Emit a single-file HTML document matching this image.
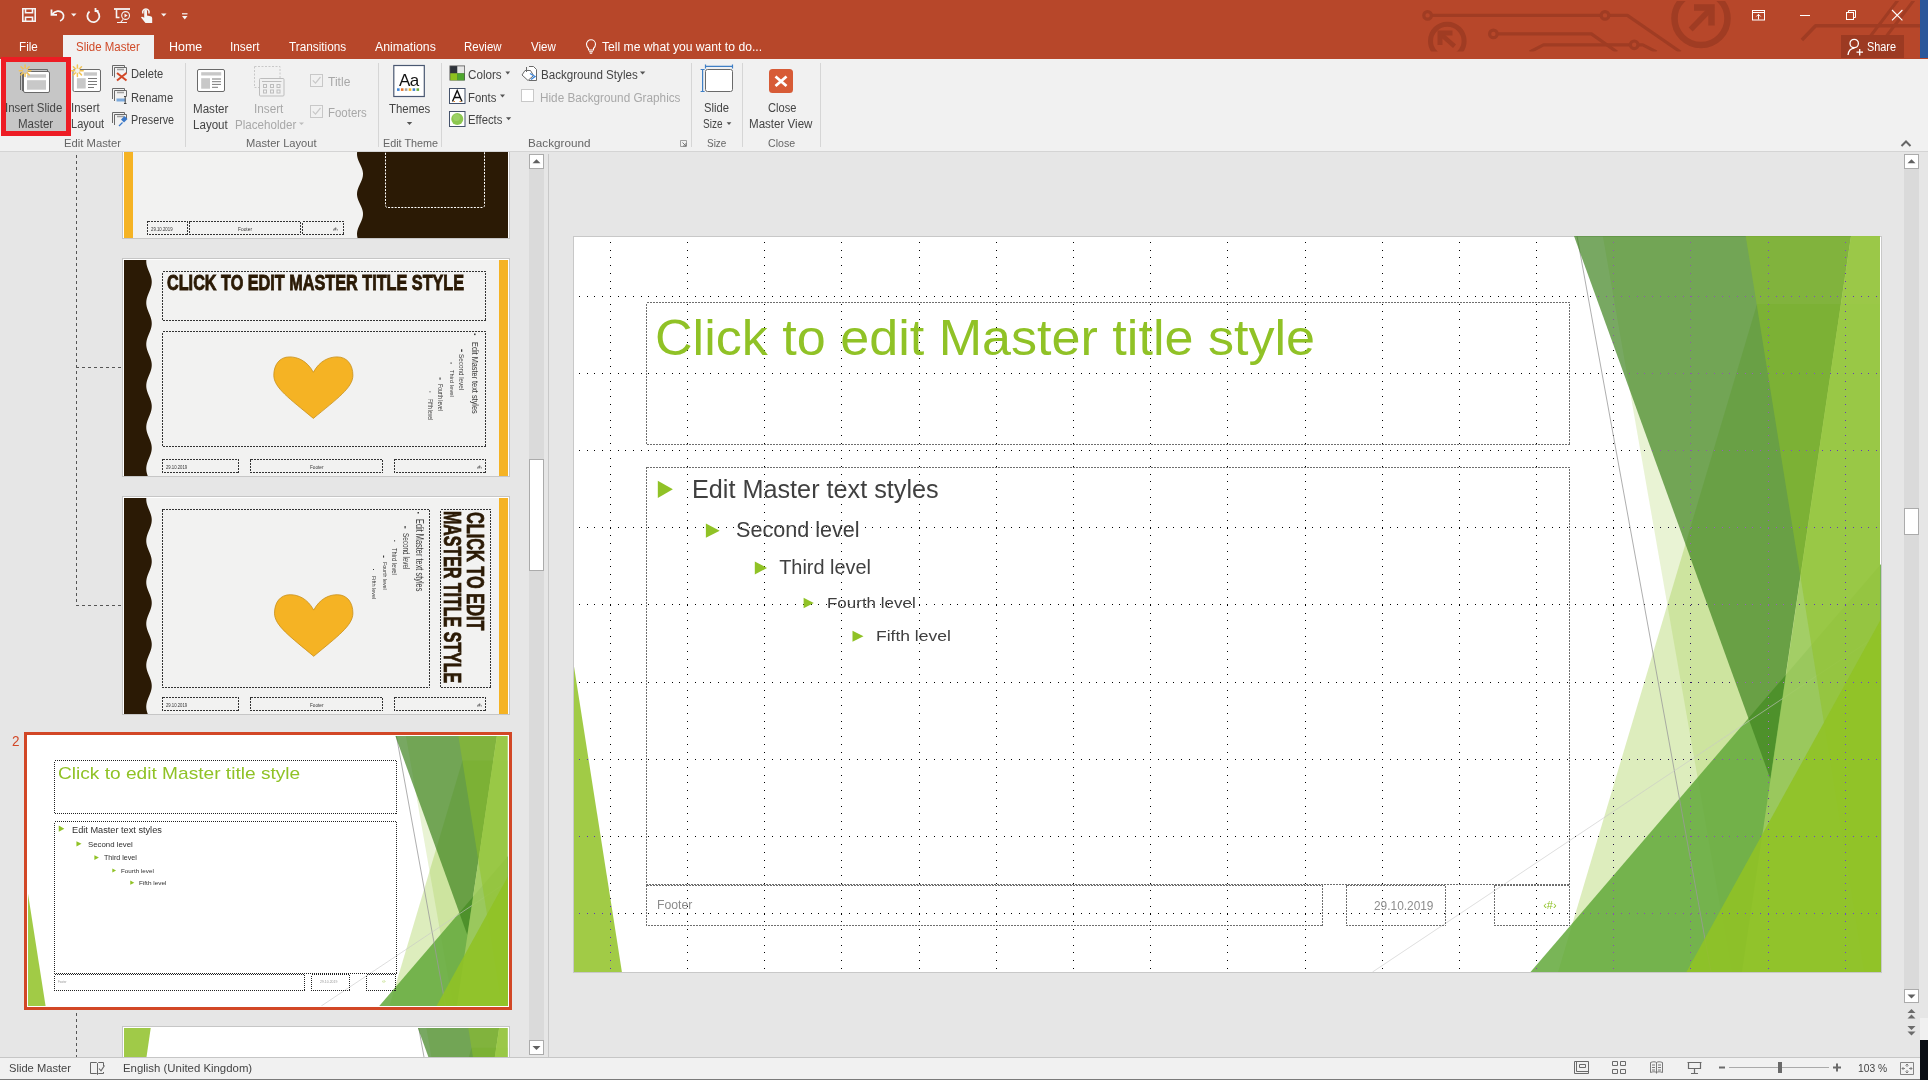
<!DOCTYPE html><html><head><meta charset='utf-8'><style>
*{margin:0;padding:0;box-sizing:border-box}
html,body{width:1928px;height:1080px;overflow:hidden;background:#E6E6E6;font-family:"Liberation Sans", sans-serif;position:relative}
.a{position:absolute}
.t{position:absolute;white-space:nowrap;line-height:1}
svg{display:block}
</style></head><body>
<div class='a' style='left:0;top:0;width:1928px;height:59px;background:#B7472A'></div>
<svg class='a' style='left:0;top:0' width='1928' height='59' viewBox='0 0 1928 59'>
<defs><clipPath id='cpat'><rect x='1400' y='1' width='520' height='50.5'/></clipPath></defs>
<g clip-path='url(#cpat)' fill='none' stroke='#A03C23' stroke-width='3.2' stroke-linejoin='round'>
<path d='M1431 15.4H1601M1609 15.4H1627.4L1680.5 52'/>
<circle cx='1427.6' cy='15.4' r='3.8'/><circle cx='1605' cy='15.4' r='3.8'/>
<path d='M1497.2 33.9H1591.4L1617 52'/><circle cx='1493.4' cy='33.9' r='3.8'/>
<path d='M1529.8 52L1543.5 44.8H1630.4M1638 44.8H1642.8L1656.5 52'/><circle cx='1634.2' cy='44.8' r='3.8'/>
<circle cx='1447.3' cy='41' r='16.8' stroke-width='5'/>
<path d='M1454.5 46.2L1439.5 33' stroke-width='4.5'/>
<path d='M1440 45V33H1452.5' stroke-width='5' stroke-linejoin='miter'/>
<circle cx='1701' cy='18.5' r='26.5' stroke-width='6.5'/>
<path d='M1690.7 29.5L1711 8.5' stroke-width='5.5'/>
<path d='M1694 7.5H1711.5V25.5' stroke-width='6.5' stroke-linejoin='miter'/>
<path d='M1801.9 40L1815.6 25.8H1920' stroke-width='3.5'/>
<path d='M1898 0L1866 42M1914 0L1882 42' stroke-width='3'/>
</g></svg>
<div class='a' style='left:1920px;top:0;width:8px;height:58px;background:#2B579A'></div>
<svg class='a' style='left:0;top:0' width='200' height='32' viewBox='0 0 200 32' fill='none' stroke='#F5F5F5' stroke-width='1.6'>
<path d='M22.8 8.8H35.2V21.2H22.8Z'/><path d='M25.5 8.8V12.8H32.5V8.8M25.5 21.2V17.2H32.5V21.2'/>
<path d='M52 14.5C55 10.5 60 10 62.5 13 C65 16 63 20 60 21' stroke-width='1.8'/><path d='M51.5 9.5V14.8H57' stroke-width='1.8'/>
<path d='M71 13.5H76.5L73.75 16.5Z' fill='#F5F5F5' stroke='none'/>
<path d='M95.5 10.5A6 6 0 1 1 89.5 11.5' stroke-width='1.8'/><path d='M95.5 8V11H98.5' stroke-width='1.8'/>
<path d='M114 9H130' stroke-width='1.8'/><path d='M116.5 9.5V17.5H119.5'/><circle cx='125.6' cy='15.5' r='3.9' stroke-width='1.1'/><path d='M124.5 13.4V17.6L127.6 15.5Z' fill='#F5F5F5' stroke='none'/><path d='M117 22.5H127M120.5 22.5L123 19.5' stroke-width='1.1'/>
<path d='M143 13.5A3.2 3.2 0 1 1 148.8 13.5' stroke-width='1.5'/><path d='M145.5 23C143.5 20.5 141.5 18.5 141 17.3C141.5 16.5 142.6 16.6 144.2 17.8V10.8A1.4 1.4 0 0 1 147 10.8V15.5L150.5 16.3C151.8 16.6 152.2 17.4 152.2 18.5V23Z' fill='#F5F5F5' stroke='none'/>
<path d='M161 13.5H166.5L163.75 16.5Z' fill='#F5F5F5' stroke='none'/>
<path d='M182 13.8H187.5' stroke-width='1.2'/><path d='M182 16H187.5L184.75 19.5Z' fill='#F5F5F5' stroke='none'/>
</svg>
<svg class='a' style='left:1740px;top:0' width='188' height='60' viewBox='1740 0 188 60' fill='none' stroke='#FFFFFF' stroke-width='1'>
<rect x='1752.5' y='10.5' width='12' height='9.5'/><path d='M1752.5 12.5H1764.5M1758.5 19.5V14.5M1756.3 16.5L1758.5 14.3L1760.7 16.5'/>
<path d='M1800 15.5H1810'/>
<rect x='1846.5' y='12.5' width='7' height='7'/><path d='M1848.5 12.5V10.5H1855.5V17.5H1853.5'/>
<path d='M1892 10L1902.4 20.4M1902.4 10L1892 20.4' stroke-width='1.1'/>
</svg>
<div class='a' style='left:1841px;top:35px;width:63px;height:23px;background:#9C3A22'></div>
<svg class='a' style='left:1846px;top:38px' width='20' height='19' viewBox='0 0 20 19' fill='none' stroke='#fff' stroke-width='1.3'>
<circle cx='8.2' cy='5.5' r='4.2'/><path d='M2 17C2.5 12.5 5 10.5 8.5 10.2'/><path d='M10.5 14.2H17M13.7 11V17.5'/></svg>
<div class='t' style='left:1867.00px;top:41.09px;font-size:12.3px;color:#fff;transform:scaleX(0.8855);transform-origin:0 0;'>Share</div>
<div class='a' style='left:63px;top:35px;width:91px;height:24px;background:#F1F1F1'></div>
<div class='t' style='left:19.05px;top:41.29px;font-size:12.3px;color:#fff;transform:scaleX(0.9486);transform-origin:0 0;'>File</div>
<div class='t' style='left:168.69px;top:41.29px;font-size:12.3px;color:#fff;transform:scaleX(1.0106);transform-origin:0 0;'>Home</div>
<div class='t' style='left:230.04px;top:41.29px;font-size:12.3px;color:#fff;transform:scaleX(0.9559);transform-origin:0 0;'>Insert</div>
<div class='t' style='left:289.00px;top:41.29px;font-size:12.3px;color:#fff;transform:scaleX(0.9574);transform-origin:0 0;'>Transitions</div>
<div class='t' style='left:375.00px;top:41.29px;font-size:12.3px;color:#fff;'>Animations</div>
<div class='t' style='left:464.07px;top:41.29px;font-size:12.3px;color:#fff;transform:scaleX(0.9306);transform-origin:0 0;'>Review</div>
<div class='t' style='left:531.00px;top:41.29px;font-size:12.3px;color:#fff;transform:scaleX(0.9416);transform-origin:0 0;'>View</div>
<div class='t' style='left:76.00px;top:41.29px;font-size:12.3px;color:#D04A28;transform:scaleX(0.9334);transform-origin:0 0;'>Slide Master</div>
<svg class='a' style='left:584px;top:38px' width='14' height='16' viewBox='0 0 14 16' fill='none' stroke='#fff' stroke-width='1.1'>
<path d='M4.5 10.5C3 9 2.5 8 2.5 6.3A4.5 4.5 0 0 1 11.5 6.3C11.5 8 11 9 9.5 10.5V12H4.5Z'/><path d='M5 13.7H9M5.8 15.2H8.2'/></svg>
<div class='t' style='left:602.00px;top:41.29px;font-size:12.3px;color:#fff;transform:scaleX(0.9878);transform-origin:0 0;'>Tell me what you want to do...</div>
<div class='a' style='left:0;top:59px;width:1928px;height:92px;background:#F1F1F1'></div>
<div class='a' style='left:0;top:151px;width:1928px;height:1px;background:#D4D4D4'></div>
<div class='a' style='left:185px;top:63px;width:1px;height:84px;background:#D6D6D6'></div>
<div class='a' style='left:378px;top:63px;width:1px;height:84px;background:#D6D6D6'></div>
<div class='a' style='left:441px;top:63px;width:1px;height:84px;background:#D6D6D6'></div>
<div class='a' style='left:691px;top:63px;width:1px;height:84px;background:#D6D6D6'></div>
<div class='a' style='left:742px;top:63px;width:1px;height:84px;background:#D6D6D6'></div>
<div class='a' style='left:820px;top:63px;width:1px;height:84px;background:#D6D6D6'></div>
<div class='a' style='left:1px;top:57px;width:70px;height:79px;border:5px solid #ED1C24;background:#C6C6C6'></div>
<svg class='a' style='left:0;top:60px' width='190' height='72' viewBox='0 60 190 72'>
<g fill='none' stroke='#6A6A6A' stroke-width='1'>
<path d='M20.5 90V73M20.5 73H22M22.5 91V71.5M22.5 69.5H47.5V71'/>
</g>
<rect x='23.5' y='71.5' width='26' height='21' rx='1.5' fill='#fff' stroke='#6A6A6A'/>
<rect x='27' y='74.3' width='19' height='3.4' fill='#C8C8C8'/><rect x='27' y='80.2' width='19' height='9.5' fill='#C8C8C8'/>
<circle cx='25.1' cy='70.8' r='3.2' fill='#C6C6C6'/>
<g stroke='#F2C458' stroke-width='1.5' stroke-linecap='round'><path d='M25.1 65V76.6M19.3 70.8H30.9M21 66.7L29.2 74.9M29.2 66.7L21 74.9'/></g>
<circle cx='25.1' cy='70.8' r='2.3' fill='#C6C6C6'/>
<rect x='73' y='69.5' width='27.5' height='22' rx='1.5' fill='#fff' stroke='#6A6A6A'/>
<circle cx='77.4' cy='70.8' r='2.8' fill='#F1F1F1'/>
<g stroke='#F2C458' stroke-width='1.5' stroke-linecap='round'><path d='M77.4 65V76.6M71.6 70.8H83.2M73.3 66.7L81.5 74.9M81.5 66.7L73.3 74.9'/></g>
<circle cx='77.4' cy='70.8' r='2.3' fill='#F1F1F1'/>
<rect x='83.8' y='72.3' width='13.2' height='3.4' fill='#C8C8C8'/><rect x='76.9' y='78.2' width='8.8' height='10.3' fill='#C8C8C8'/>
<path d='M88 78.5H97M88 81.5H97M88 84.5H97M88 87.5H94' stroke='#7A7A7A' stroke-width='1'/>
<g fill='none' stroke='#6A6A6A' stroke-width='1'>
<path d='M112.5 76V65.5H124.5V67.5M114.5 77.5V67.5H126.5V73'/>
<path d='M112.5 99V88.5H124.5V90.5M114.5 101V90.5H126.5V96'/>
<path d='M112.5 123V112.5H124.5V114.5M114.5 125V114.5H126.5V119'/>
</g>
<path d='M117 69.5H124M117 92.5H124M117 116.5H124' stroke='#A0A0A0' stroke-width='1.5'/>
<path d='M117 73L126.5 80.5M126.5 73L117 80.5' stroke='#D24726' stroke-width='2'/>
<rect x='116.5' y='98.5' width='9' height='3' fill='#7BA9DC'/>
<path d='M124 96.5H126.5M125.2 96.5V103.5M124 103.5H126.5' stroke='#444' stroke-width='1'/>
<path d='M119 126L122.5 122.5' stroke='#3B78C8' stroke-width='1.3'/><path d='M121 119.5L124.5 116L127.5 119L124 122.5Z' fill='#3B78C8'/>
</svg>
<div class='t' style='left:5.45px;top:102.34px;font-size:12px;color:#444444;transform:scaleX(0.9536);transform-origin:0 0;'>Insert Slide</div>
<div class='t' style='left:17.50px;top:118.14px;font-size:12px;color:#444444;transform:scaleX(0.9597);transform-origin:0 0;'>Master</div>
<div class='t' style='left:71.45px;top:102.34px;font-size:12px;color:#444444;transform:scaleX(0.9536);transform-origin:0 0;'>Insert</div>
<div class='t' style='left:70.80px;top:118.14px;font-size:12px;color:#444444;transform:scaleX(0.9184);transform-origin:0 0;'>Layout</div>
<div class='t' style='left:130.60px;top:68.34px;font-size:12px;color:#444444;transform:scaleX(0.9282);transform-origin:0 0;'>Delete</div>
<div class='t' style='left:130.60px;top:91.54px;font-size:12px;color:#444444;transform:scaleX(0.9281);transform-origin:0 0;'>Rename</div>
<div class='t' style='left:130.60px;top:114.14px;font-size:12px;color:#444444;transform:scaleX(0.8977);transform-origin:0 0;'>Preserve</div>
<div class='t' style='left:63.60px;top:137.67px;font-size:11.5px;color:#666666;transform:scaleX(0.9790);transform-origin:0 0;'>Edit Master</div>
<svg class='a' style='left:185px;top:60px' width='260' height='72' viewBox='185 60 260 72'>
<rect x='197.5' y='69.5' width='27' height='22' rx='1.5' fill='#fff' stroke='#6A6A6A'/>
<rect x='201.2' y='72.2' width='20' height='3.3' fill='#C8C8C8'/><rect x='201.2' y='78.2' width='8.8' height='10.5' fill='#C8C8C8'/>
<path d='M212 79H221M212 81.7H221M212 84.4H221M212 87.3H218' stroke='#7A7A7A' stroke-width='1'/>
<rect x='254.5' y='66.5' width='25.5' height='21' fill='none' stroke='#C8C8C8' stroke-dasharray='2 1.5'/>
<rect x='259.5' y='78.5' width='24.5' height='17.5' rx='1' fill='#F1F1F1' stroke='#BDBDBD'/>
<path d='M262 81.5H281.5' stroke='#BDBDBD'/>
<g fill='none' stroke='#BDBDBD' stroke-width='1'>
<rect x='263.5' y='84.5' width='3' height='3'/><rect x='270.5' y='84.5' width='3' height='3'/><rect x='277' y='84.5' width='3' height='3'/>
<rect x='263.5' y='90' width='3' height='3'/><rect x='270.5' y='90' width='3' height='3'/><rect x='277' y='90' width='3' height='3'/>
</g>
<rect x='310.5' y='74.5' width='12' height='12' fill='#F1F1F1' stroke='#C8C8C8'/>
<rect x='310.5' y='105.5' width='12' height='12' fill='#F1F1F1' stroke='#C8C8C8'/>
<path d='M312.8 80.3L315.5 83.2L320.5 77M312.8 111.3L315.5 114.2L320.5 108' fill='none' stroke='#C8C8C8' stroke-width='1.2'/>
<path d='M299 122.5H304L301.5 125Z' fill='#BDBDBD'/>
<rect x='393.8' y='65.5' width='30.5' height='31' fill='#fff' stroke='#4A5872' stroke-width='1.2'/>
<rect x='397' y='88.3' width='2.6' height='2.6' fill='#3F86D8'/><rect x='400.9' y='88.3' width='2.6' height='2.6' fill='#E8742A'/>
<rect x='404.8' y='88.3' width='2.6' height='2.6' fill='#A5A5A5'/><rect x='408.7' y='88.3' width='2.6' height='2.6' fill='#F5B820'/>
<rect x='412.6' y='88.3' width='2.6' height='2.6' fill='#3E7ED0'/><rect x='416.5' y='88.3' width='2.6' height='2.6' fill='#6AAE3E'/>
<path d='M406.8 122H412.2L409.5 125Z' fill='#555'/>
</svg>
<div class='t' style='left:399px;top:71.5px;font-size:17px;color:#111;letter-spacing:-0.5px'>Aa</div>
<div class='t' style='left:193.40px;top:102.64px;font-size:12px;color:#444444;transform:scaleX(0.9652);transform-origin:0 0;'>Master</div>
<div class='t' style='left:193.40px;top:118.64px;font-size:12px;color:#444444;transform:scaleX(0.9647);transform-origin:0 0;'>Layout</div>
<div class='t' style='left:254.12px;top:102.64px;font-size:12px;color:#A8A8A8;transform:scaleX(0.9772);transform-origin:0 0;'>Insert</div>
<div class='t' style='left:234.60px;top:118.64px;font-size:12px;color:#A8A8A8;transform:scaleX(0.9672);transform-origin:0 0;'>Placeholder</div>
<div class='t' style='left:328.20px;top:76.24px;font-size:12px;color:#A8A8A8;transform:scaleX(1.0066);transform-origin:0 0;'>Title</div>
<div class='t' style='left:328.20px;top:107.34px;font-size:12px;color:#A8A8A8;transform:scaleX(0.9537);transform-origin:0 0;'>Footers</div>
<div class='t' style='left:246.40px;top:137.67px;font-size:11.5px;color:#666666;transform:scaleX(0.9691);transform-origin:0 0;'>Master Layout</div>
<div class='t' style='left:388.60px;top:102.64px;font-size:12px;color:#444444;transform:scaleX(0.9505);transform-origin:0 0;'>Themes</div>
<div class='t' style='left:382.60px;top:137.67px;font-size:11.5px;color:#666666;transform:scaleX(0.9400);transform-origin:0 0;'>Edit Theme</div>
<svg class='a' style='left:440px;top:60px' width='260' height='92' viewBox='440 60 260 92'>
<rect x='449.5' y='65.5' width='15.5' height='15' fill='#555' />
<rect x='450.3' y='66.3' width='7' height='7' fill='#2E333B'/><rect x='457.3' y='66.3' width='7' height='7' fill='#E6E6E6'/>
<rect x='450.3' y='73.3' width='7' height='7' fill='#8DC21F'/><rect x='457.3' y='73.3' width='7' height='7' fill='#4EA72E'/>
<rect x='449.5' y='88.5' width='15.5' height='15' fill='#fff' stroke='#45526A'/>
<path d='M452.5 101.5L457.2 90.5L462 101.5M454.3 97.5H460.2' fill='none' stroke='#111' stroke-width='1.4'/>
<path d='M453.5 101.5H455M459.5 101.5H461' stroke='#E8872A' stroke-width='1'/>
<rect x='449.5' y='111.5' width='15.5' height='15' fill='#fff' stroke='#45526A'/>
<circle cx='457.25' cy='119' r='6' fill='#8CC74F'/><circle cx='456.5' cy='117.5' r='3.5' fill='#A6D774' opacity='0.6'/>
<path d='M505.4 71.5H510.1L507.75 74.5Z M500 94.5H505L502.5 97.5Z M506 117.3H511.2L508.6 120.3Z' fill='#555'/>
<path d='M639.9 71.5H645.3L642.6 74.5Z' fill='#555'/>
<path d='M529 66.5H533.5L536.5 69.5V80.5H529' fill='#fff' stroke='#6A6A6A'/>
<path d='M525 70.5L530.5 70.5L533.5 75.5L528 80.5L522 75Z' fill='#fff' stroke='#6A6A6A'/>
<path d='M526.5 67V72' stroke='#6A6A6A'/>
<path d='M530 73.5L535 76.5L531 79.5' fill='none' stroke='#3F86D8' stroke-width='1.4'/>
<rect x='521.5' y='89.5' width='12' height='12' fill='#fff' stroke='#C8C8C8'/>
<path d='M680.5 140.5H686.5V146.5H680.5Z' fill='none' stroke='#8A8A8A' stroke-width='0.8'/>
<path d='M682.5 142.5L686 146M683 146H686V143' fill='none' stroke='#777' stroke-width='1'/>
</svg>
<svg class='a' style='left:695px;top:60px' width='110' height='40' viewBox='695 60 110 40'>
<rect x='705.5' y='69.5' width='27' height='22' rx='2' fill='#fff' stroke='#6A6A6A'/>
<rect x='769' y='69' width='24' height='24' rx='3.5' fill='#D75B36'/>
<path d='M775.5 76.5L786.5 86M786.5 76.5L775.5 86' stroke='#fff' stroke-width='2.8'/>

<path d='M705.5 66.4H732.5M705.5 64.5V68.5M732.5 64.5V68.5M702.6 69.5V91.5M700.6 69.5H704.6M700.6 91.5H704.6' stroke='#3F7FC5' stroke-width='1.2' fill='none'/>
</svg>
<div class='t' style='left:468.30px;top:68.64px;font-size:12px;color:#444444;transform:scaleX(0.9719);transform-origin:0 0;'>Colors</div>
<div class='t' style='left:468.30px;top:91.54px;font-size:12px;color:#444444;transform:scaleX(0.9430);transform-origin:0 0;'>Fonts</div>
<div class='t' style='left:468.30px;top:114.44px;font-size:12px;color:#444444;transform:scaleX(0.9434);transform-origin:0 0;'>Effects</div>
<div class='t' style='left:540.50px;top:68.64px;font-size:12px;color:#444444;transform:scaleX(0.9665);transform-origin:0 0;'>Background Styles</div>
<div class='t' style='left:539.50px;top:91.54px;font-size:12px;color:#A8A8A8;transform:scaleX(0.9797);transform-origin:0 0;'>Hide Background Graphics</div>
<div class='t' style='left:527.70px;top:137.67px;font-size:11.5px;color:#666666;transform:scaleX(1.0167);transform-origin:0 0;'>Background</div>
<div class='t' style='left:703.90px;top:102.14px;font-size:12px;color:#444444;transform:scaleX(0.9367);transform-origin:0 0;'>Slide</div>
<div class='t' style='left:703.20px;top:118.24px;font-size:12px;color:#444444;transform:scaleX(0.8365);transform-origin:0 0;'>Size</div>
<svg class='a' style='left:726px;top:121px' width='6' height='5'><path d='M0.6 1.2H5.4L3 4Z' fill='#555'/></svg>
<div class='t' style='left:707.40px;top:137.67px;font-size:11.5px;color:#666666;transform:scaleX(0.8646);transform-origin:0 0;'>Size</div>
<div class='t' style='left:767.50px;top:102.14px;font-size:12px;color:#444444;transform:scaleX(0.9256);transform-origin:0 0;'>Close</div>
<div class='t' style='left:749.40px;top:118.24px;font-size:12px;color:#444444;transform:scaleX(0.9647);transform-origin:0 0;'>Master View</div>
<div class='t' style='left:767.70px;top:137.67px;font-size:11.5px;color:#666666;transform:scaleX(0.9205);transform-origin:0 0;'>Close</div>
<svg class='a' style='left:1899px;top:137px' width='14' height='12'><path d='M2.5 9L7 4.5L11.5 9' fill='none' stroke='#666' stroke-width='2'/></svg>
<svg class='a' style='left:0;top:152px' width='122' height='905' viewBox='0 152 122 905'><path d='M76.5 149V602.5M76 367.5H121M76 605.5H121M76.5 1013V1057' stroke='#555' stroke-width='1' stroke-dasharray='3 3' fill='none' shape-rendering='crispEdges'/></svg>
<div class='a' style='left:0;top:152px;width:528px;height:905px;overflow:hidden'>
<div class='a' style='left:0;top:-152px;width:528px;height:1080px'>
<div class='a' style='left:122px;top:20px;width:388px;height:219px;border:1px solid #C6C6C6;background:#fff'></div>
<svg class='a' style='left:124px;top:22px' width='384' height='216' viewBox='124 22 384 216'>
<rect x='124' y='22' width='384' height='216' fill='#F2F2F1'/>
<rect x='124' y='22' width='9' height='216' fill='#F5B324'/>
<polygon points='508,22 360.93,22.0 360.24,23.5 359.53,25.0 358.85,26.5 358.24,28.0 357.72,29.5 357.33,31.0 357.08,32.5 357.00,34.0 357.08,35.5 357.33,37.0 357.72,38.5 358.24,40.0 358.85,41.5 359.53,43.0 360.24,44.5 360.93,46.0 361.57,47.5 362.12,49.0 362.56,50.5 362.85,52.0 362.99,53.5 362.96,55.0 362.77,56.5 362.43,58.0 361.95,59.5 361.36,61.0 360.70,62.5 360.00,64.0 359.30,65.5 358.64,67.0 358.05,68.5 357.57,70.0 357.23,71.5 357.04,73.0 357.01,74.5 357.15,76.0 357.44,77.5 357.88,79.0 358.43,80.5 359.07,82.0 359.76,83.5 360.47,85.0 361.15,86.5 361.76,88.0 362.28,89.5 362.67,91.0 362.92,92.5 363.00,94.0 362.92,95.5 362.67,97.0 362.28,98.5 361.76,100.0 361.15,101.5 360.47,103.0 359.76,104.5 359.07,106.0 358.43,107.5 357.88,109.0 357.44,110.5 357.15,112.0 357.01,113.5 357.04,115.0 357.23,116.5 357.57,118.0 358.05,119.5 358.64,121.0 359.30,122.5 360.00,124.0 360.70,125.5 361.36,127.0 361.95,128.5 362.43,130.0 362.77,131.5 362.96,133.0 362.99,134.5 362.85,136.0 362.56,137.5 362.12,139.0 361.57,140.5 360.93,142.0 360.24,143.5 359.53,145.0 358.85,146.5 358.24,148.0 357.72,149.5 357.33,151.0 357.08,152.5 357.00,154.0 357.08,155.5 357.33,157.0 357.72,158.5 358.24,160.0 358.85,161.5 359.53,163.0 360.24,164.5 360.93,166.0 361.57,167.5 362.12,169.0 362.56,170.5 362.85,172.0 362.99,173.5 362.96,175.0 362.77,176.5 362.43,178.0 361.95,179.5 361.36,181.0 360.70,182.5 360.00,184.0 359.30,185.5 358.64,187.0 358.05,188.5 357.57,190.0 357.23,191.5 357.04,193.0 357.01,194.5 357.15,196.0 357.44,197.5 357.88,199.0 358.43,200.5 359.07,202.0 359.76,203.5 360.47,205.0 361.15,206.5 361.76,208.0 362.28,209.5 362.67,211.0 362.92,212.5 363.00,214.0 362.92,215.5 362.67,217.0 362.28,218.5 361.76,220.0 361.15,221.5 360.47,223.0 359.76,224.5 359.07,226.0 358.43,227.5 357.88,229.0 357.44,230.5 357.15,232.0 357.01,233.5 357.04,235.0 357.23,236.5 357.57,238.0 508,238' fill='#2B1A05'/>
<rect x='385.5' y='10.5' width='99' height='197' rx='2' fill='none' stroke='#fff' stroke-width='1' stroke-dasharray='2 1.3'/>
<rect x='147.5' y='221.5' width='40' height='13' fill='none' stroke='#333' stroke-width='1' stroke-dasharray='2 1' shape-rendering='crispEdges'/>
<rect x='189.5' y='221.5' width='111' height='13' fill='none' stroke='#333' stroke-width='1' stroke-dasharray='2 1' shape-rendering='crispEdges'/>
<rect x='302.5' y='221.5' width='41' height='13' fill='none' stroke='#333' stroke-width='1' stroke-dasharray='2 1' shape-rendering='crispEdges'/>
</svg>
<div class='t' style='left:151.00px;top:225.72px;font-size:6px;color:#333;transform:scaleX(0.7168);transform-origin:0 0;'>29.10.2019</div>
<div class='t' style='left:238.00px;top:225.72px;font-size:6px;color:#333;transform:scaleX(0.8073);transform-origin:0 0;'>Footer</div>
<div class='t' style='left:333.00px;top:226.57px;font-size:5px;color:#333;transform:scaleX(0.7757);transform-origin:0 0;'>‹#›</div>
<div class='a' style='left:122px;top:258px;width:388px;height:219px;border:1px solid #C6C6C6;background:#fff'></div>
<svg class='a' style='left:124px;top:260px' width='384' height='216' viewBox='124 260 384 216'>
<rect x='124' y='260' width='384' height='216' fill='#F2F2F1'/>
<polygon points='124,260 146.30,260.0 146.25,261.5 146.35,263.0 146.58,264.5 146.93,266.0 147.39,267.5 147.94,269.0 148.53,270.5 149.16,272.0 149.77,273.5 150.34,275.0 150.85,276.5 151.26,278.0 151.56,279.5 151.72,281.0 151.74,282.5 151.62,284.0 151.37,285.5 151.00,287.0 150.52,288.5 149.97,290.0 149.36,291.5 148.74,293.0 148.13,294.5 147.57,296.0 147.07,297.5 146.68,299.0 146.41,300.5 146.27,302.0 146.27,303.5 146.41,305.0 146.68,306.5 147.07,308.0 147.57,309.5 148.13,311.0 148.74,312.5 149.36,314.0 149.97,315.5 150.52,317.0 151.00,318.5 151.37,320.0 151.62,321.5 151.74,323.0 151.72,324.5 151.56,326.0 151.26,327.5 150.85,329.0 150.34,330.5 149.77,332.0 149.16,333.5 148.53,335.0 147.94,336.5 147.39,338.0 146.93,339.5 146.58,341.0 146.35,342.5 146.25,344.0 146.30,345.5 146.48,347.0 146.80,348.5 147.23,350.0 147.75,351.5 148.33,353.0 148.95,354.5 149.57,356.0 150.16,357.5 150.69,359.0 151.14,360.5 151.47,362.0 151.68,363.5 151.75,365.0 151.68,366.5 151.47,368.0 151.14,369.5 150.69,371.0 150.16,372.5 149.57,374.0 148.95,375.5 148.33,377.0 147.75,378.5 147.23,380.0 146.80,381.5 146.48,383.0 146.30,384.5 146.25,386.0 146.35,387.5 146.58,389.0 146.93,390.5 147.39,392.0 147.94,393.5 148.53,395.0 149.16,396.5 149.77,398.0 150.34,399.5 150.85,401.0 151.26,402.5 151.56,404.0 151.72,405.5 151.74,407.0 151.62,408.5 151.37,410.0 151.00,411.5 150.52,413.0 149.97,414.5 149.36,416.0 148.74,417.5 148.13,419.0 147.57,420.5 147.07,422.0 146.68,423.5 146.41,425.0 146.27,426.5 146.27,428.0 146.41,429.5 146.68,431.0 147.07,432.5 147.57,434.0 148.13,435.5 148.74,437.0 149.36,438.5 149.97,440.0 150.52,441.5 151.00,443.0 151.37,444.5 151.62,446.0 151.74,447.5 151.72,449.0 151.56,450.5 151.26,452.0 150.85,453.5 150.34,455.0 149.77,456.5 149.16,458.0 148.53,459.5 147.94,461.0 147.39,462.5 146.93,464.0 146.58,465.5 146.35,467.0 146.25,468.5 146.30,470.0 146.48,471.5 146.80,473.0 147.23,474.5 147.75,476.0 147.75,476 124,476' fill='#2B1A05'/>
<rect x='499' y='260' width='9' height='216' fill='#F5B324'/>
<rect x='162.5' y='271.5' width='323' height='49' fill='none' stroke='#333' stroke-width='1' stroke-dasharray='2 1' shape-rendering='crispEdges'/>
<rect x='162.5' y='331.5' width='323' height='115' fill='none' stroke='#333' stroke-width='1' stroke-dasharray='2 1' shape-rendering='crispEdges'/>
<path d='M313.35 372.27C307.02 360.59 297.53 356.90 289.62 356.90C279.34 356.90 273.80 364.89 273.80 375.35C273.80 387.65 289.62 398.72 313.35 418.40C337.08 398.72 352.90 387.65 352.90 375.35C352.90 364.89 347.36 356.90 337.08 356.90C329.17 356.90 319.68 360.59 313.35 372.27Z' fill='#F5B324' stroke='#C98F17' stroke-width='0.8'/>
<rect x='162.5' y='459.5' width='76' height='13' fill='none' stroke='#333' stroke-width='1' stroke-dasharray='2 1' shape-rendering='crispEdges'/>
<rect x='250.5' y='459.5' width='132' height='13' fill='none' stroke='#333' stroke-width='1' stroke-dasharray='2 1' shape-rendering='crispEdges'/>
<rect x='394.5' y='459.5' width='91' height='13' fill='none' stroke='#333' stroke-width='1' stroke-dasharray='2 1' shape-rendering='crispEdges'/>
<rect x='474' y='333.5' width='1.6' height='1.6' fill='#3A3A3A'/>
<rect x='461' y='349.3' width='1.3' height='2.5' fill='#3A3A3A'/>
<rect x='450.5' y='362.5' width='1.2' height='1.2' fill='#3A3A3A'/>
<rect x='439.5' y='377.5' width='1.1' height='2.2' fill='#3A3A3A'/>
<rect x='429.5' y='391.3' width='1' height='1' fill='#3A3A3A'/>
</svg>
<div class='t' style='left:166.50px;top:272.32px;font-size:21.6px;color:#2B1A05;font-weight:700;transform:scaleX(0.7512);transform-origin:0 0;-webkit-text-stroke:0.9px #2B1A05;'>CLICK TO EDIT MASTER TITLE STYLE</div>
<div class='t' style='left:479.96px;top:341.50px;font-size:9.64px;color:#3A3A3A;transform:rotate(90deg) scaleX(0.7612);transform-origin:0 0'>Edit Master text styles</div>
<div class='t' style='left:464.81px;top:354.40px;font-size:6.98px;color:#3A3A3A;transform:rotate(90deg) scaleX(0.9069);transform-origin:0 0'>Second level</div>
<div class='t' style='left:453.77px;top:370.20px;font-size:5.87px;color:#3A3A3A;transform:rotate(90deg) scaleX(0.9953);transform-origin:0 0'>Third level</div>
<div class='t' style='left:443.27px;top:383.90px;font-size:6.70px;color:#3A3A3A;transform:rotate(90deg) scaleX(0.7672);transform-origin:0 0'>Fourth level</div>
<div class='t' style='left:433.16px;top:398.90px;font-size:6.56px;color:#3A3A3A;transform:rotate(90deg) scaleX(0.7563);transform-origin:0 0'>Fifth level</div>
<div class='t' style='left:166.00px;top:463.72px;font-size:6px;color:#333;transform:scaleX(0.7038);transform-origin:0 0;'>29.10.2019</div>
<div class='t' style='left:309.50px;top:463.72px;font-size:6px;color:#333;transform:scaleX(0.7784);transform-origin:0 0;'>Footer</div>
<div class='t' style='left:477.00px;top:464.57px;font-size:5px;color:#333;transform:scaleX(0.7757);transform-origin:0 0;'>‹#›</div>
<div class='a' style='left:122px;top:496px;width:388px;height:219px;border:1px solid #C6C6C6;background:#fff'></div>
<svg class='a' style='left:124px;top:498px' width='384' height='216' viewBox='124 498 384 216'>
<rect x='124' y='498' width='384' height='216' fill='#F2F2F1'/>
<polygon points='124,498 146.30,498.0 146.25,499.5 146.35,501.0 146.58,502.5 146.93,504.0 147.39,505.5 147.94,507.0 148.53,508.5 149.16,510.0 149.77,511.5 150.34,513.0 150.85,514.5 151.26,516.0 151.56,517.5 151.72,519.0 151.74,520.5 151.62,522.0 151.37,523.5 151.00,525.0 150.52,526.5 149.97,528.0 149.36,529.5 148.74,531.0 148.13,532.5 147.57,534.0 147.07,535.5 146.68,537.0 146.41,538.5 146.27,540.0 146.27,541.5 146.41,543.0 146.68,544.5 147.07,546.0 147.57,547.5 148.13,549.0 148.74,550.5 149.36,552.0 149.97,553.5 150.52,555.0 151.00,556.5 151.37,558.0 151.62,559.5 151.74,561.0 151.72,562.5 151.56,564.0 151.26,565.5 150.85,567.0 150.34,568.5 149.77,570.0 149.16,571.5 148.53,573.0 147.94,574.5 147.39,576.0 146.93,577.5 146.58,579.0 146.35,580.5 146.25,582.0 146.30,583.5 146.48,585.0 146.80,586.5 147.23,588.0 147.75,589.5 148.33,591.0 148.95,592.5 149.57,594.0 150.16,595.5 150.69,597.0 151.14,598.5 151.47,600.0 151.68,601.5 151.75,603.0 151.68,604.5 151.47,606.0 151.14,607.5 150.69,609.0 150.16,610.5 149.57,612.0 148.95,613.5 148.33,615.0 147.75,616.5 147.23,618.0 146.80,619.5 146.48,621.0 146.30,622.5 146.25,624.0 146.35,625.5 146.58,627.0 146.93,628.5 147.39,630.0 147.94,631.5 148.53,633.0 149.16,634.5 149.77,636.0 150.34,637.5 150.85,639.0 151.26,640.5 151.56,642.0 151.72,643.5 151.74,645.0 151.62,646.5 151.37,648.0 151.00,649.5 150.52,651.0 149.97,652.5 149.36,654.0 148.74,655.5 148.13,657.0 147.57,658.5 147.07,660.0 146.68,661.5 146.41,663.0 146.27,664.5 146.27,666.0 146.41,667.5 146.68,669.0 147.07,670.5 147.57,672.0 148.13,673.5 148.74,675.0 149.36,676.5 149.97,678.0 150.52,679.5 151.00,681.0 151.37,682.5 151.62,684.0 151.74,685.5 151.72,687.0 151.56,688.5 151.26,690.0 150.85,691.5 150.34,693.0 149.77,694.5 149.16,696.0 148.53,697.5 147.94,699.0 147.39,700.5 146.93,702.0 146.58,703.5 146.35,705.0 146.25,706.5 146.30,708.0 146.48,709.5 146.80,711.0 147.23,712.5 147.75,714.0 147.75,714 124,714' fill='#2B1A05'/>
<rect x='499' y='498' width='9' height='216' fill='#F5B324'/>
<rect x='162.5' y='509.5' width='267' height='178' fill='none' stroke='#333' stroke-width='1' stroke-dasharray='2 1' shape-rendering='crispEdges'/>
<rect x='440.5' y='509.5' width='50' height='178' fill='none' stroke='#333' stroke-width='1' stroke-dasharray='2 1' shape-rendering='crispEdges'/>
<path d='M313.70 610.10C307.43 598.40 298.02 594.70 290.18 594.70C279.99 594.70 274.50 602.71 274.50 613.18C274.50 625.50 290.18 636.59 313.70 656.30C337.22 636.59 352.90 625.50 352.90 613.18C352.90 602.71 347.41 594.70 337.22 594.70C329.38 594.70 319.97 598.40 313.70 610.10Z' fill='#F5B324' stroke='#C98F17' stroke-width='0.8'/>
<rect x='162.5' y='697.5' width='76' height='13' fill='none' stroke='#333' stroke-width='1' stroke-dasharray='2 1' shape-rendering='crispEdges'/>
<rect x='250.5' y='697.5' width='132' height='13' fill='none' stroke='#333' stroke-width='1' stroke-dasharray='2 1' shape-rendering='crispEdges'/>
<rect x='394.5' y='697.5' width='91' height='13' fill='none' stroke='#333' stroke-width='1' stroke-dasharray='2 1' shape-rendering='crispEdges'/>
<rect x='417.5' y='512' width='1.5' height='1.5' fill='#3A3A3A'/>
<rect x='404.5' y='526' width='1.2' height='2.4' fill='#3A3A3A'/>
<rect x='394' y='540.3' width='1.1' height='1.1' fill='#3A3A3A'/>
<rect x='383' y='555.5' width='1.1' height='2.1' fill='#3A3A3A'/>
<rect x='373' y='569' width='1' height='1' fill='#3A3A3A'/>
</svg>
<div class='t' style='left:486.33px;top:511.70px;font-size:23.18px;color:#2B1A05;font-weight:700;-webkit-text-stroke:0.8px #2B1A05;transform:rotate(90deg) scaleX(0.7039);transform-origin:0 0'>CLICK TO EDIT</div>
<div class='t' style='left:463.52px;top:511.03px;font-size:23.88px;color:#2B1A05;font-weight:700;-webkit-text-stroke:0.8px #2B1A05;transform:rotate(90deg) scaleX(0.6688);transform-origin:0 0'>MASTER TITLE STYLE</div>
<div class='t' style='left:423.83px;top:519.00px;font-size:10.20px;color:#3A3A3A;transform:rotate(90deg) scaleX(0.7263);transform-origin:0 0'>Edit Master text styles</div>
<div class='t' style='left:410.15px;top:532.50px;font-size:8.80px;color:#3A3A3A;transform:rotate(90deg) scaleX(0.7252);transform-origin:0 0'>Second level</div>
<div class='t' style='left:398.45px;top:548.00px;font-size:7.26px;color:#3A3A3A;transform:rotate(90deg) scaleX(0.8040);transform-origin:0 0'>Third level</div>
<div class='t' style='left:386.75px;top:561.70px;font-size:5.73px;color:#3A3A3A;transform:rotate(90deg) scaleX(0.9288);transform-origin:0 0'>Fourth level</div>
<div class='t' style='left:377.04px;top:576.25px;font-size:6.08px;color:#3A3A3A;transform:rotate(90deg) scaleX(0.8966);transform-origin:0 0'>Fifth level</div>
<div class='t' style='left:166.00px;top:701.72px;font-size:6px;color:#333;transform:scaleX(0.7038);transform-origin:0 0;'>29.10.2019</div>
<div class='t' style='left:309.50px;top:701.72px;font-size:6px;color:#333;transform:scaleX(0.7784);transform-origin:0 0;'>Footer</div>
<div class='t' style='left:477.00px;top:702.57px;font-size:5px;color:#333;transform:scaleX(0.7757);transform-origin:0 0;'>‹#›</div>
</div></div>
<div class='a' style='left:0;top:152px;width:528px;height:905px;overflow:hidden'>
<div class='a' style='left:0;top:-152px;width:528px;height:1080px'>
<div class='a' style='left:24px;top:732px;width:488px;height:278px;border:3px solid #D24726;background:#fff'></div>
<div class='t' style='left:12.10px;top:733.75px;font-size:14px;color:#D24726;transform:scaleX(0.9625);transform-origin:0 0;'>2</div>
<svg class='a' style='left:28px;top:736px' width='480' height='270' viewBox='574 237 1307 735' preserveAspectRatio='none'>
<polygon points='574,666.5 621.9,972 574,972' fill='#90C226' fill-opacity='0.85'/>
<polygon points='1602.8,236 1880,236 1880,972 1731.6,972' fill='#90C226' fill-opacity='0.2'/>
<polygon points='1558,972 1757,304 1880,304 1880,972' fill='#90C226' fill-opacity='0.3'/>
<polygon points='1530.5,972 1881,564 1881,972' fill='#62A83A' fill-opacity='0.85'/>
<line x1='1577' y1='236' x2='1711' y2='972' stroke='#9A9A9A' stroke-width='1' stroke-opacity='0.8' vector-effect='non-scaling-stroke'/>
<polygon points='1574,236 1851,236 1770.3,778.7' fill='#3E831F' fill-opacity='0.7'/>
<line x1='1372.5' y1='972' x2='1881' y2='633' stroke='#C8C8C8' stroke-width='1' stroke-opacity='0.6' vector-effect='non-scaling-stroke'/>
<polygon points='1851,236 1880,236 1880,972 1742,972' fill='#9ECB5F' fill-opacity='0.9'/>
<polygon points='1745.7,236 1880,236 1880,972 1864,972' fill='#90C226' fill-opacity='0.5'/>
<polygon points='1686.4,972 1881,619 1881,972' fill='#90C226' fill-opacity='0.9'/>

<polygon points='657.8,480.8 672.9,489.35 657.8,497.9' fill='#90C226'/>
<polygon points='705.9,523.5 719.7,530.65 705.9,537.8' fill='#90C226'/>
<polygon points='754.8,561.4 767,567.95 754.8,574.5' fill='#90C226'/>
<polygon points='803.6,597.7 813.8,603.0 803.6,608.3' fill='#90C226'/>
<polygon points='852.5,630.7 863.5,636.2 852.5,641.7' fill='#90C226'/>
</svg>
<svg class='a' style='left:28px;top:736px' width='480' height='270' viewBox='28 736 480 270'>
<rect x='54.5' y='760.5' width='342' height='53' fill='none' stroke='#222' stroke-width='1' stroke-dasharray='1 1' shape-rendering='crispEdges'/>
<rect x='54.5' y='821.5' width='342' height='152' fill='none' stroke='#222' stroke-width='1' stroke-dasharray='1 1' shape-rendering='crispEdges'/>
<rect x='54.5' y='974.5' width='250' height='16' fill='none' stroke='#222' stroke-width='1' stroke-dasharray='1 1' shape-rendering='crispEdges'/>
<rect x='311.5' y='974.5' width='38' height='16' fill='none' stroke='#222' stroke-width='1' stroke-dasharray='1 1' shape-rendering='crispEdges'/>
<rect x='366.5' y='974.5' width='29' height='16' fill='none' stroke='#222' stroke-width='1' stroke-dasharray='1 1' shape-rendering='crispEdges'/>
</svg>
<div class='t' style='left:57.60px;top:764.91px;font-size:17px;color:#90C226;transform:scaleX(1.1245);transform-origin:0 0;'>Click to edit Master title style</div>
<div class='t' style='left:72.10px;top:825.50px;font-size:8.5px;color:#2E2E2E;transform:scaleX(1.0810);transform-origin:0 0;'>Edit Master text styles</div>
<div class='t' style='left:87.50px;top:840.83px;font-size:8px;color:#2E2E2E;transform:scaleX(0.9776);transform-origin:0 0;'>Second level</div>
<div class='t' style='left:103.70px;top:854.42px;font-size:7.3px;color:#2E2E2E;transform:scaleX(0.9754);transform-origin:0 0;'>Third level</div>
<div class='t' style='left:121.20px;top:868.25px;font-size:6.2px;color:#2E2E2E;transform:scaleX(1.0140);transform-origin:0 0;'>Fourth level</div>
<div class='t' style='left:139.00px;top:880.15px;font-size:6.2px;color:#2E2E2E;transform:scaleX(1.0343);transform-origin:0 0;'>Fifth level</div>
<div class='t' style='left:57.60px;top:980.41px;font-size:4px;color:#999;transform:scaleX(0.7360);transform-origin:0 0;'>Footer</div>
<div class='t' style='left:320.00px;top:980.41px;font-size:4px;color:#999;transform:scaleX(0.8656);transform-origin:0 0;'>29.10.2019</div>
<div class='t' style='left:382.00px;top:980.41px;font-size:4px;color:#90C226;transform:scaleX(0.7199);transform-origin:0 0;'>‹#›</div>
<div class='a' style='left:122px;top:1026px;width:388px;height:225px;border:1px solid #C6C6C6;background:#fff'></div>
<svg class='a' style='left:124px;top:1028px' width='384' height='216' viewBox='574 237 1307 735' preserveAspectRatio='none'>

<polygon points='1602.8,236 1880,236 1880,972 1731.6,972' fill='#90C226' fill-opacity='0.2'/>
<polygon points='1558,972 1757,304 1880,304 1880,972' fill='#90C226' fill-opacity='0.3'/>
<polygon points='1530.5,972 1881,564 1881,972' fill='#62A83A' fill-opacity='0.85'/>
<line x1='1577' y1='236' x2='1711' y2='972' stroke='#9A9A9A' stroke-width='1' stroke-opacity='0.8' vector-effect='non-scaling-stroke'/>
<polygon points='1574,236 1851,236 1770.3,778.7' fill='#3E831F' fill-opacity='0.7'/>
<line x1='1372.5' y1='972' x2='1881' y2='633' stroke='#C8C8C8' stroke-width='1' stroke-opacity='0.6' vector-effect='non-scaling-stroke'/>
<polygon points='1851,236 1880,236 1880,972 1742,972' fill='#9ECB5F' fill-opacity='0.9'/>
<polygon points='1745.7,236 1880,236 1880,972 1864,972' fill='#90C226' fill-opacity='0.5'/>
<polygon points='1686.4,972 1881,619 1881,972' fill='#90C226' fill-opacity='0.9'/>

<polygon points='574,237 665,237 574,862' fill='#A0CA48'/>
</svg>
</div></div>
<div class='a' style='left:529px;top:169px;width:15px;height:872px;background:#DADADA'></div>
<div class='a' style='left:529px;top:154px;width:15px;height:15px;background:#fff;border:1px solid #ABABAB'></div>
<div class='a' style='left:529px;top:1040px;width:15px;height:15px;background:#fff;border:1px solid #ABABAB'></div>
<div class='a' style='left:529px;top:459px;width:15px;height:112px;background:#fff;border:1px solid #ABABAB'></div>
<svg class='a' style='left:529px;top:154px' width='15' height='15'><path d='M3.5 9.2H11.5L7.5 5.2Z' fill='#606060'/></svg>
<svg class='a' style='left:529px;top:1040px' width='15' height='15'><path d='M3.5 6H11.5L7.5 10Z' fill='#606060'/></svg>
<div class='a' style='left:548px;top:154px;width:1px;height:903px;background:#C8C8C8'></div>
<div class='a' style='left:1904px;top:169px;width:15px;height:821px;background:#DADADA'></div>
<div class='a' style='left:1904px;top:154px;width:15px;height:15px;background:#fff;border:1px solid #ABABAB'></div>
<div class='a' style='left:1904px;top:989px;width:15px;height:14px;background:#fff;border:1px solid #ABABAB'></div>
<div class='a' style='left:1904px;top:508px;width:15px;height:27px;background:#fff;border:1px solid #ABABAB'></div>
<svg class='a' style='left:1904px;top:154px' width='15' height='15'><path d='M3.5 9.2H11.5L7.5 5.2Z' fill='#606060'/></svg>
<svg class='a' style='left:1904px;top:989px' width='15' height='14'><path d='M3.5 5.5H11.5L7.5 9.5Z' fill='#606060'/></svg>
<svg class='a' style='left:1904px;top:1006px' width='15' height='32'><path d='M3.5 7H11.5L7.5 3Z M3.5 12.5H11.5L7.5 8.5Z M3.5 20H11.5L7.5 24Z M3.5 25.5H11.5L7.5 29.5Z' fill='#6A6A6A'/></svg>
<div class='a' style='left:573px;top:236px;width:1309px;height:737px;background:#fff;border:1px solid #C8C8C8'></div>
<svg class='a' style='left:574px;top:236px' width='1307' height='736' viewBox='574 236 1307 736'>
<polygon points='574,666.5 621.9,972 574,972' fill='#90C226' fill-opacity='0.85'/>
<polygon points='1602.8,236 1880,236 1880,972 1731.6,972' fill='#90C226' fill-opacity='0.2'/>
<polygon points='1558,972 1757,304 1880,304 1880,972' fill='#90C226' fill-opacity='0.3'/>
<polygon points='1530.5,972 1881,564 1881,972' fill='#62A83A' fill-opacity='0.85'/>
<line x1='1577' y1='236' x2='1711' y2='972' stroke='#9A9A9A' stroke-width='1' stroke-opacity='0.8'/>
<polygon points='1574,236 1851,236 1770.3,778.7' fill='#3E831F' fill-opacity='0.7'/>
<line x1='1372.5' y1='972' x2='1881' y2='633' stroke='#C8C8C8' stroke-width='1' stroke-opacity='0.6'/>
<polygon points='1851,236 1880,236 1880,972 1742,972' fill='#9ECB5F' fill-opacity='0.9'/>
<polygon points='1745.7,236 1880,236 1880,972 1864,972' fill='#90C226' fill-opacity='0.5'/>
<polygon points='1686.4,972 1881,619 1881,972' fill='#90C226' fill-opacity='0.9'/>

<path d='M579 296h1v1h-1zM587 296h1v1h-1zM594 296h1v1h-1zM602 296h1v1h-1zM610 296h1v1h-1zM618 296h1v1h-1zM625 296h1v1h-1zM633 296h1v1h-1zM641 296h1v1h-1zM648 296h1v1h-1zM656 296h1v1h-1zM664 296h1v1h-1zM672 296h1v1h-1zM679 296h1v1h-1zM687 296h1v1h-1zM695 296h1v1h-1zM703 296h1v1h-1zM710 296h1v1h-1zM718 296h1v1h-1zM726 296h1v1h-1zM733 296h1v1h-1zM741 296h1v1h-1zM749 296h1v1h-1zM757 296h1v1h-1zM764 296h1v1h-1zM772 296h1v1h-1zM780 296h1v1h-1zM787 296h1v1h-1zM795 296h1v1h-1zM803 296h1v1h-1zM811 296h1v1h-1zM818 296h1v1h-1zM826 296h1v1h-1zM834 296h1v1h-1zM841 296h1v1h-1zM849 296h1v1h-1zM857 296h1v1h-1zM865 296h1v1h-1zM872 296h1v1h-1zM880 296h1v1h-1zM888 296h1v1h-1zM896 296h1v1h-1zM903 296h1v1h-1zM911 296h1v1h-1zM919 296h1v1h-1zM926 296h1v1h-1zM934 296h1v1h-1zM942 296h1v1h-1zM950 296h1v1h-1zM957 296h1v1h-1zM965 296h1v1h-1zM973 296h1v1h-1zM980 296h1v1h-1zM988 296h1v1h-1zM996 296h1v1h-1zM1004 296h1v1h-1zM1011 296h1v1h-1zM1019 296h1v1h-1zM1027 296h1v1h-1zM1034 296h1v1h-1zM1042 296h1v1h-1zM1050 296h1v1h-1zM1058 296h1v1h-1zM1065 296h1v1h-1zM1073 296h1v1h-1zM1081 296h1v1h-1zM1089 296h1v1h-1zM1096 296h1v1h-1zM1104 296h1v1h-1zM1112 296h1v1h-1zM1119 296h1v1h-1zM1127 296h1v1h-1zM1135 296h1v1h-1zM1143 296h1v1h-1zM1150 296h1v1h-1zM1158 296h1v1h-1zM1166 296h1v1h-1zM1173 296h1v1h-1zM1181 296h1v1h-1zM1189 296h1v1h-1zM1197 296h1v1h-1zM1204 296h1v1h-1zM1212 296h1v1h-1zM1220 296h1v1h-1zM1227 296h1v1h-1zM1235 296h1v1h-1zM1243 296h1v1h-1zM1251 296h1v1h-1zM1258 296h1v1h-1zM1266 296h1v1h-1zM1274 296h1v1h-1zM1282 296h1v1h-1zM1289 296h1v1h-1zM1297 296h1v1h-1zM1305 296h1v1h-1zM1312 296h1v1h-1zM1320 296h1v1h-1zM1328 296h1v1h-1zM1336 296h1v1h-1zM1343 296h1v1h-1zM1351 296h1v1h-1zM1359 296h1v1h-1zM1366 296h1v1h-1zM1374 296h1v1h-1zM1382 296h1v1h-1zM1390 296h1v1h-1zM1397 296h1v1h-1zM1405 296h1v1h-1zM1413 296h1v1h-1zM1420 296h1v1h-1zM1428 296h1v1h-1zM1436 296h1v1h-1zM1444 296h1v1h-1zM1451 296h1v1h-1zM1459 296h1v1h-1zM1467 296h1v1h-1zM1475 296h1v1h-1zM1482 296h1v1h-1zM1490 296h1v1h-1zM1498 296h1v1h-1zM1505 296h1v1h-1zM1513 296h1v1h-1zM1521 296h1v1h-1zM1529 296h1v1h-1zM1536 296h1v1h-1zM1544 296h1v1h-1zM1552 296h1v1h-1zM1559 296h1v1h-1zM1567 296h1v1h-1zM1575 296h1v1h-1zM1583 296h1v1h-1zM1590 296h1v1h-1zM1598 296h1v1h-1zM1606 296h1v1h-1zM1613 296h1v1h-1zM1621 296h1v1h-1zM1629 296h1v1h-1zM1637 296h1v1h-1zM1644 296h1v1h-1zM1652 296h1v1h-1zM1660 296h1v1h-1zM1668 296h1v1h-1zM1675 296h1v1h-1zM1683 296h1v1h-1zM1691 296h1v1h-1zM1698 296h1v1h-1zM1706 296h1v1h-1zM1714 296h1v1h-1zM1722 296h1v1h-1zM1729 296h1v1h-1zM1737 296h1v1h-1zM1745 296h1v1h-1zM1752 296h1v1h-1zM1760 296h1v1h-1zM1768 296h1v1h-1zM1776 296h1v1h-1zM1783 296h1v1h-1zM1791 296h1v1h-1zM1799 296h1v1h-1zM1806 296h1v1h-1zM1814 296h1v1h-1zM1822 296h1v1h-1zM1830 296h1v1h-1zM1837 296h1v1h-1zM1845 296h1v1h-1zM1853 296h1v1h-1zM1861 296h1v1h-1zM1868 296h1v1h-1zM1876 296h1v1h-1zM579 373h1v1h-1zM587 373h1v1h-1zM594 373h1v1h-1zM602 373h1v1h-1zM610 373h1v1h-1zM618 373h1v1h-1zM625 373h1v1h-1zM633 373h1v1h-1zM641 373h1v1h-1zM648 373h1v1h-1zM656 373h1v1h-1zM664 373h1v1h-1zM672 373h1v1h-1zM679 373h1v1h-1zM687 373h1v1h-1zM695 373h1v1h-1zM703 373h1v1h-1zM710 373h1v1h-1zM718 373h1v1h-1zM726 373h1v1h-1zM733 373h1v1h-1zM741 373h1v1h-1zM749 373h1v1h-1zM757 373h1v1h-1zM764 373h1v1h-1zM772 373h1v1h-1zM780 373h1v1h-1zM787 373h1v1h-1zM795 373h1v1h-1zM803 373h1v1h-1zM811 373h1v1h-1zM818 373h1v1h-1zM826 373h1v1h-1zM834 373h1v1h-1zM841 373h1v1h-1zM849 373h1v1h-1zM857 373h1v1h-1zM865 373h1v1h-1zM872 373h1v1h-1zM880 373h1v1h-1zM888 373h1v1h-1zM896 373h1v1h-1zM903 373h1v1h-1zM911 373h1v1h-1zM919 373h1v1h-1zM926 373h1v1h-1zM934 373h1v1h-1zM942 373h1v1h-1zM950 373h1v1h-1zM957 373h1v1h-1zM965 373h1v1h-1zM973 373h1v1h-1zM980 373h1v1h-1zM988 373h1v1h-1zM996 373h1v1h-1zM1004 373h1v1h-1zM1011 373h1v1h-1zM1019 373h1v1h-1zM1027 373h1v1h-1zM1034 373h1v1h-1zM1042 373h1v1h-1zM1050 373h1v1h-1zM1058 373h1v1h-1zM1065 373h1v1h-1zM1073 373h1v1h-1zM1081 373h1v1h-1zM1089 373h1v1h-1zM1096 373h1v1h-1zM1104 373h1v1h-1zM1112 373h1v1h-1zM1119 373h1v1h-1zM1127 373h1v1h-1zM1135 373h1v1h-1zM1143 373h1v1h-1zM1150 373h1v1h-1zM1158 373h1v1h-1zM1166 373h1v1h-1zM1173 373h1v1h-1zM1181 373h1v1h-1zM1189 373h1v1h-1zM1197 373h1v1h-1zM1204 373h1v1h-1zM1212 373h1v1h-1zM1220 373h1v1h-1zM1227 373h1v1h-1zM1235 373h1v1h-1zM1243 373h1v1h-1zM1251 373h1v1h-1zM1258 373h1v1h-1zM1266 373h1v1h-1zM1274 373h1v1h-1zM1282 373h1v1h-1zM1289 373h1v1h-1zM1297 373h1v1h-1zM1305 373h1v1h-1zM1312 373h1v1h-1zM1320 373h1v1h-1zM1328 373h1v1h-1zM1336 373h1v1h-1zM1343 373h1v1h-1zM1351 373h1v1h-1zM1359 373h1v1h-1zM1366 373h1v1h-1zM1374 373h1v1h-1zM1382 373h1v1h-1zM1390 373h1v1h-1zM1397 373h1v1h-1zM1405 373h1v1h-1zM1413 373h1v1h-1zM1420 373h1v1h-1zM1428 373h1v1h-1zM1436 373h1v1h-1zM1444 373h1v1h-1zM1451 373h1v1h-1zM1459 373h1v1h-1zM1467 373h1v1h-1zM1475 373h1v1h-1zM1482 373h1v1h-1zM1490 373h1v1h-1zM1498 373h1v1h-1zM1505 373h1v1h-1zM1513 373h1v1h-1zM1521 373h1v1h-1zM1529 373h1v1h-1zM1536 373h1v1h-1zM1544 373h1v1h-1zM1552 373h1v1h-1zM1559 373h1v1h-1zM1567 373h1v1h-1zM1575 373h1v1h-1zM1583 373h1v1h-1zM1590 373h1v1h-1zM1598 373h1v1h-1zM1606 373h1v1h-1zM1613 373h1v1h-1zM1621 373h1v1h-1zM1629 373h1v1h-1zM1637 373h1v1h-1zM1644 373h1v1h-1zM1652 373h1v1h-1zM1660 373h1v1h-1zM1668 373h1v1h-1zM1675 373h1v1h-1zM1683 373h1v1h-1zM1691 373h1v1h-1zM1698 373h1v1h-1zM1706 373h1v1h-1zM1714 373h1v1h-1zM1722 373h1v1h-1zM1729 373h1v1h-1zM1737 373h1v1h-1zM1745 373h1v1h-1zM1752 373h1v1h-1zM1760 373h1v1h-1zM1768 373h1v1h-1zM1776 373h1v1h-1zM1783 373h1v1h-1zM1791 373h1v1h-1zM1799 373h1v1h-1zM1806 373h1v1h-1zM1814 373h1v1h-1zM1822 373h1v1h-1zM1830 373h1v1h-1zM1837 373h1v1h-1zM1845 373h1v1h-1zM1853 373h1v1h-1zM1861 373h1v1h-1zM1868 373h1v1h-1zM1876 373h1v1h-1zM579 450h1v1h-1zM587 450h1v1h-1zM594 450h1v1h-1zM602 450h1v1h-1zM610 450h1v1h-1zM618 450h1v1h-1zM625 450h1v1h-1zM633 450h1v1h-1zM641 450h1v1h-1zM648 450h1v1h-1zM656 450h1v1h-1zM664 450h1v1h-1zM672 450h1v1h-1zM679 450h1v1h-1zM687 450h1v1h-1zM695 450h1v1h-1zM703 450h1v1h-1zM710 450h1v1h-1zM718 450h1v1h-1zM726 450h1v1h-1zM733 450h1v1h-1zM741 450h1v1h-1zM749 450h1v1h-1zM757 450h1v1h-1zM764 450h1v1h-1zM772 450h1v1h-1zM780 450h1v1h-1zM787 450h1v1h-1zM795 450h1v1h-1zM803 450h1v1h-1zM811 450h1v1h-1zM818 450h1v1h-1zM826 450h1v1h-1zM834 450h1v1h-1zM841 450h1v1h-1zM849 450h1v1h-1zM857 450h1v1h-1zM865 450h1v1h-1zM872 450h1v1h-1zM880 450h1v1h-1zM888 450h1v1h-1zM896 450h1v1h-1zM903 450h1v1h-1zM911 450h1v1h-1zM919 450h1v1h-1zM926 450h1v1h-1zM934 450h1v1h-1zM942 450h1v1h-1zM950 450h1v1h-1zM957 450h1v1h-1zM965 450h1v1h-1zM973 450h1v1h-1zM980 450h1v1h-1zM988 450h1v1h-1zM996 450h1v1h-1zM1004 450h1v1h-1zM1011 450h1v1h-1zM1019 450h1v1h-1zM1027 450h1v1h-1zM1034 450h1v1h-1zM1042 450h1v1h-1zM1050 450h1v1h-1zM1058 450h1v1h-1zM1065 450h1v1h-1zM1073 450h1v1h-1zM1081 450h1v1h-1zM1089 450h1v1h-1zM1096 450h1v1h-1zM1104 450h1v1h-1zM1112 450h1v1h-1zM1119 450h1v1h-1zM1127 450h1v1h-1zM1135 450h1v1h-1zM1143 450h1v1h-1zM1150 450h1v1h-1zM1158 450h1v1h-1zM1166 450h1v1h-1zM1173 450h1v1h-1zM1181 450h1v1h-1zM1189 450h1v1h-1zM1197 450h1v1h-1zM1204 450h1v1h-1zM1212 450h1v1h-1zM1220 450h1v1h-1zM1227 450h1v1h-1zM1235 450h1v1h-1zM1243 450h1v1h-1zM1251 450h1v1h-1zM1258 450h1v1h-1zM1266 450h1v1h-1zM1274 450h1v1h-1zM1282 450h1v1h-1zM1289 450h1v1h-1zM1297 450h1v1h-1zM1305 450h1v1h-1zM1312 450h1v1h-1zM1320 450h1v1h-1zM1328 450h1v1h-1zM1336 450h1v1h-1zM1343 450h1v1h-1zM1351 450h1v1h-1zM1359 450h1v1h-1zM1366 450h1v1h-1zM1374 450h1v1h-1zM1382 450h1v1h-1zM1390 450h1v1h-1zM1397 450h1v1h-1zM1405 450h1v1h-1zM1413 450h1v1h-1zM1420 450h1v1h-1zM1428 450h1v1h-1zM1436 450h1v1h-1zM1444 450h1v1h-1zM1451 450h1v1h-1zM1459 450h1v1h-1zM1467 450h1v1h-1zM1475 450h1v1h-1zM1482 450h1v1h-1zM1490 450h1v1h-1zM1498 450h1v1h-1zM1505 450h1v1h-1zM1513 450h1v1h-1zM1521 450h1v1h-1zM1529 450h1v1h-1zM1536 450h1v1h-1zM1544 450h1v1h-1zM1552 450h1v1h-1zM1559 450h1v1h-1zM1567 450h1v1h-1zM1575 450h1v1h-1zM1583 450h1v1h-1zM1590 450h1v1h-1zM1598 450h1v1h-1zM1606 450h1v1h-1zM1613 450h1v1h-1zM1621 450h1v1h-1zM1629 450h1v1h-1zM1637 450h1v1h-1zM1644 450h1v1h-1zM1652 450h1v1h-1zM1660 450h1v1h-1zM1668 450h1v1h-1zM1675 450h1v1h-1zM1683 450h1v1h-1zM1691 450h1v1h-1zM1698 450h1v1h-1zM1706 450h1v1h-1zM1714 450h1v1h-1zM1722 450h1v1h-1zM1729 450h1v1h-1zM1737 450h1v1h-1zM1745 450h1v1h-1zM1752 450h1v1h-1zM1760 450h1v1h-1zM1768 450h1v1h-1zM1776 450h1v1h-1zM1783 450h1v1h-1zM1791 450h1v1h-1zM1799 450h1v1h-1zM1806 450h1v1h-1zM1814 450h1v1h-1zM1822 450h1v1h-1zM1830 450h1v1h-1zM1837 450h1v1h-1zM1845 450h1v1h-1zM1853 450h1v1h-1zM1861 450h1v1h-1zM1868 450h1v1h-1zM1876 450h1v1h-1zM579 527h1v1h-1zM587 527h1v1h-1zM594 527h1v1h-1zM602 527h1v1h-1zM610 527h1v1h-1zM618 527h1v1h-1zM625 527h1v1h-1zM633 527h1v1h-1zM641 527h1v1h-1zM648 527h1v1h-1zM656 527h1v1h-1zM664 527h1v1h-1zM672 527h1v1h-1zM679 527h1v1h-1zM687 527h1v1h-1zM695 527h1v1h-1zM703 527h1v1h-1zM710 527h1v1h-1zM718 527h1v1h-1zM726 527h1v1h-1zM733 527h1v1h-1zM741 527h1v1h-1zM749 527h1v1h-1zM757 527h1v1h-1zM764 527h1v1h-1zM772 527h1v1h-1zM780 527h1v1h-1zM787 527h1v1h-1zM795 527h1v1h-1zM803 527h1v1h-1zM811 527h1v1h-1zM818 527h1v1h-1zM826 527h1v1h-1zM834 527h1v1h-1zM841 527h1v1h-1zM849 527h1v1h-1zM857 527h1v1h-1zM865 527h1v1h-1zM872 527h1v1h-1zM880 527h1v1h-1zM888 527h1v1h-1zM896 527h1v1h-1zM903 527h1v1h-1zM911 527h1v1h-1zM919 527h1v1h-1zM926 527h1v1h-1zM934 527h1v1h-1zM942 527h1v1h-1zM950 527h1v1h-1zM957 527h1v1h-1zM965 527h1v1h-1zM973 527h1v1h-1zM980 527h1v1h-1zM988 527h1v1h-1zM996 527h1v1h-1zM1004 527h1v1h-1zM1011 527h1v1h-1zM1019 527h1v1h-1zM1027 527h1v1h-1zM1034 527h1v1h-1zM1042 527h1v1h-1zM1050 527h1v1h-1zM1058 527h1v1h-1zM1065 527h1v1h-1zM1073 527h1v1h-1zM1081 527h1v1h-1zM1089 527h1v1h-1zM1096 527h1v1h-1zM1104 527h1v1h-1zM1112 527h1v1h-1zM1119 527h1v1h-1zM1127 527h1v1h-1zM1135 527h1v1h-1zM1143 527h1v1h-1zM1150 527h1v1h-1zM1158 527h1v1h-1zM1166 527h1v1h-1zM1173 527h1v1h-1zM1181 527h1v1h-1zM1189 527h1v1h-1zM1197 527h1v1h-1zM1204 527h1v1h-1zM1212 527h1v1h-1zM1220 527h1v1h-1zM1227 527h1v1h-1zM1235 527h1v1h-1zM1243 527h1v1h-1zM1251 527h1v1h-1zM1258 527h1v1h-1zM1266 527h1v1h-1zM1274 527h1v1h-1zM1282 527h1v1h-1zM1289 527h1v1h-1zM1297 527h1v1h-1zM1305 527h1v1h-1zM1312 527h1v1h-1zM1320 527h1v1h-1zM1328 527h1v1h-1zM1336 527h1v1h-1zM1343 527h1v1h-1zM1351 527h1v1h-1zM1359 527h1v1h-1zM1366 527h1v1h-1zM1374 527h1v1h-1zM1382 527h1v1h-1zM1390 527h1v1h-1zM1397 527h1v1h-1zM1405 527h1v1h-1zM1413 527h1v1h-1zM1420 527h1v1h-1zM1428 527h1v1h-1zM1436 527h1v1h-1zM1444 527h1v1h-1zM1451 527h1v1h-1zM1459 527h1v1h-1zM1467 527h1v1h-1zM1475 527h1v1h-1zM1482 527h1v1h-1zM1490 527h1v1h-1zM1498 527h1v1h-1zM1505 527h1v1h-1zM1513 527h1v1h-1zM1521 527h1v1h-1zM1529 527h1v1h-1zM1536 527h1v1h-1zM1544 527h1v1h-1zM1552 527h1v1h-1zM1559 527h1v1h-1zM1567 527h1v1h-1zM1575 527h1v1h-1zM1583 527h1v1h-1zM1590 527h1v1h-1zM1598 527h1v1h-1zM1606 527h1v1h-1zM1613 527h1v1h-1zM1621 527h1v1h-1zM1629 527h1v1h-1zM1637 527h1v1h-1zM1644 527h1v1h-1zM1652 527h1v1h-1zM1660 527h1v1h-1zM1668 527h1v1h-1zM1675 527h1v1h-1zM1683 527h1v1h-1zM1691 527h1v1h-1zM1698 527h1v1h-1zM1706 527h1v1h-1zM1714 527h1v1h-1zM1722 527h1v1h-1zM1729 527h1v1h-1zM1737 527h1v1h-1zM1745 527h1v1h-1zM1752 527h1v1h-1zM1760 527h1v1h-1zM1768 527h1v1h-1zM1776 527h1v1h-1zM1783 527h1v1h-1zM1791 527h1v1h-1zM1799 527h1v1h-1zM1806 527h1v1h-1zM1814 527h1v1h-1zM1822 527h1v1h-1zM1830 527h1v1h-1zM1837 527h1v1h-1zM1845 527h1v1h-1zM1853 527h1v1h-1zM1861 527h1v1h-1zM1868 527h1v1h-1zM1876 527h1v1h-1zM579 604h1v1h-1zM587 604h1v1h-1zM594 604h1v1h-1zM602 604h1v1h-1zM610 604h1v1h-1zM618 604h1v1h-1zM625 604h1v1h-1zM633 604h1v1h-1zM641 604h1v1h-1zM648 604h1v1h-1zM656 604h1v1h-1zM664 604h1v1h-1zM672 604h1v1h-1zM679 604h1v1h-1zM687 604h1v1h-1zM695 604h1v1h-1zM703 604h1v1h-1zM710 604h1v1h-1zM718 604h1v1h-1zM726 604h1v1h-1zM733 604h1v1h-1zM741 604h1v1h-1zM749 604h1v1h-1zM757 604h1v1h-1zM764 604h1v1h-1zM772 604h1v1h-1zM780 604h1v1h-1zM787 604h1v1h-1zM795 604h1v1h-1zM803 604h1v1h-1zM811 604h1v1h-1zM818 604h1v1h-1zM826 604h1v1h-1zM834 604h1v1h-1zM841 604h1v1h-1zM849 604h1v1h-1zM857 604h1v1h-1zM865 604h1v1h-1zM872 604h1v1h-1zM880 604h1v1h-1zM888 604h1v1h-1zM896 604h1v1h-1zM903 604h1v1h-1zM911 604h1v1h-1zM919 604h1v1h-1zM926 604h1v1h-1zM934 604h1v1h-1zM942 604h1v1h-1zM950 604h1v1h-1zM957 604h1v1h-1zM965 604h1v1h-1zM973 604h1v1h-1zM980 604h1v1h-1zM988 604h1v1h-1zM996 604h1v1h-1zM1004 604h1v1h-1zM1011 604h1v1h-1zM1019 604h1v1h-1zM1027 604h1v1h-1zM1034 604h1v1h-1zM1042 604h1v1h-1zM1050 604h1v1h-1zM1058 604h1v1h-1zM1065 604h1v1h-1zM1073 604h1v1h-1zM1081 604h1v1h-1zM1089 604h1v1h-1zM1096 604h1v1h-1zM1104 604h1v1h-1zM1112 604h1v1h-1zM1119 604h1v1h-1zM1127 604h1v1h-1zM1135 604h1v1h-1zM1143 604h1v1h-1zM1150 604h1v1h-1zM1158 604h1v1h-1zM1166 604h1v1h-1zM1173 604h1v1h-1zM1181 604h1v1h-1zM1189 604h1v1h-1zM1197 604h1v1h-1zM1204 604h1v1h-1zM1212 604h1v1h-1zM1220 604h1v1h-1zM1227 604h1v1h-1zM1235 604h1v1h-1zM1243 604h1v1h-1zM1251 604h1v1h-1zM1258 604h1v1h-1zM1266 604h1v1h-1zM1274 604h1v1h-1zM1282 604h1v1h-1zM1289 604h1v1h-1zM1297 604h1v1h-1zM1305 604h1v1h-1zM1312 604h1v1h-1zM1320 604h1v1h-1zM1328 604h1v1h-1zM1336 604h1v1h-1zM1343 604h1v1h-1zM1351 604h1v1h-1zM1359 604h1v1h-1zM1366 604h1v1h-1zM1374 604h1v1h-1zM1382 604h1v1h-1zM1390 604h1v1h-1zM1397 604h1v1h-1zM1405 604h1v1h-1zM1413 604h1v1h-1zM1420 604h1v1h-1zM1428 604h1v1h-1zM1436 604h1v1h-1zM1444 604h1v1h-1zM1451 604h1v1h-1zM1459 604h1v1h-1zM1467 604h1v1h-1zM1475 604h1v1h-1zM1482 604h1v1h-1zM1490 604h1v1h-1zM1498 604h1v1h-1zM1505 604h1v1h-1zM1513 604h1v1h-1zM1521 604h1v1h-1zM1529 604h1v1h-1zM1536 604h1v1h-1zM1544 604h1v1h-1zM1552 604h1v1h-1zM1559 604h1v1h-1zM1567 604h1v1h-1zM1575 604h1v1h-1zM1583 604h1v1h-1zM1590 604h1v1h-1zM1598 604h1v1h-1zM1606 604h1v1h-1zM1613 604h1v1h-1zM1621 604h1v1h-1zM1629 604h1v1h-1zM1637 604h1v1h-1zM1644 604h1v1h-1zM1652 604h1v1h-1zM1660 604h1v1h-1zM1668 604h1v1h-1zM1675 604h1v1h-1zM1683 604h1v1h-1zM1691 604h1v1h-1zM1698 604h1v1h-1zM1706 604h1v1h-1zM1714 604h1v1h-1zM1722 604h1v1h-1zM1729 604h1v1h-1zM1737 604h1v1h-1zM1745 604h1v1h-1zM1752 604h1v1h-1zM1760 604h1v1h-1zM1768 604h1v1h-1zM1776 604h1v1h-1zM1783 604h1v1h-1zM1791 604h1v1h-1zM1799 604h1v1h-1zM1806 604h1v1h-1zM1814 604h1v1h-1zM1822 604h1v1h-1zM1830 604h1v1h-1zM1837 604h1v1h-1zM1845 604h1v1h-1zM1853 604h1v1h-1zM1861 604h1v1h-1zM1868 604h1v1h-1zM1876 604h1v1h-1zM579 682h1v1h-1zM587 682h1v1h-1zM594 682h1v1h-1zM602 682h1v1h-1zM610 682h1v1h-1zM618 682h1v1h-1zM625 682h1v1h-1zM633 682h1v1h-1zM641 682h1v1h-1zM648 682h1v1h-1zM656 682h1v1h-1zM664 682h1v1h-1zM672 682h1v1h-1zM679 682h1v1h-1zM687 682h1v1h-1zM695 682h1v1h-1zM703 682h1v1h-1zM710 682h1v1h-1zM718 682h1v1h-1zM726 682h1v1h-1zM733 682h1v1h-1zM741 682h1v1h-1zM749 682h1v1h-1zM757 682h1v1h-1zM764 682h1v1h-1zM772 682h1v1h-1zM780 682h1v1h-1zM787 682h1v1h-1zM795 682h1v1h-1zM803 682h1v1h-1zM811 682h1v1h-1zM818 682h1v1h-1zM826 682h1v1h-1zM834 682h1v1h-1zM841 682h1v1h-1zM849 682h1v1h-1zM857 682h1v1h-1zM865 682h1v1h-1zM872 682h1v1h-1zM880 682h1v1h-1zM888 682h1v1h-1zM896 682h1v1h-1zM903 682h1v1h-1zM911 682h1v1h-1zM919 682h1v1h-1zM926 682h1v1h-1zM934 682h1v1h-1zM942 682h1v1h-1zM950 682h1v1h-1zM957 682h1v1h-1zM965 682h1v1h-1zM973 682h1v1h-1zM980 682h1v1h-1zM988 682h1v1h-1zM996 682h1v1h-1zM1004 682h1v1h-1zM1011 682h1v1h-1zM1019 682h1v1h-1zM1027 682h1v1h-1zM1034 682h1v1h-1zM1042 682h1v1h-1zM1050 682h1v1h-1zM1058 682h1v1h-1zM1065 682h1v1h-1zM1073 682h1v1h-1zM1081 682h1v1h-1zM1089 682h1v1h-1zM1096 682h1v1h-1zM1104 682h1v1h-1zM1112 682h1v1h-1zM1119 682h1v1h-1zM1127 682h1v1h-1zM1135 682h1v1h-1zM1143 682h1v1h-1zM1150 682h1v1h-1zM1158 682h1v1h-1zM1166 682h1v1h-1zM1173 682h1v1h-1zM1181 682h1v1h-1zM1189 682h1v1h-1zM1197 682h1v1h-1zM1204 682h1v1h-1zM1212 682h1v1h-1zM1220 682h1v1h-1zM1227 682h1v1h-1zM1235 682h1v1h-1zM1243 682h1v1h-1zM1251 682h1v1h-1zM1258 682h1v1h-1zM1266 682h1v1h-1zM1274 682h1v1h-1zM1282 682h1v1h-1zM1289 682h1v1h-1zM1297 682h1v1h-1zM1305 682h1v1h-1zM1312 682h1v1h-1zM1320 682h1v1h-1zM1328 682h1v1h-1zM1336 682h1v1h-1zM1343 682h1v1h-1zM1351 682h1v1h-1zM1359 682h1v1h-1zM1366 682h1v1h-1zM1374 682h1v1h-1zM1382 682h1v1h-1zM1390 682h1v1h-1zM1397 682h1v1h-1zM1405 682h1v1h-1zM1413 682h1v1h-1zM1420 682h1v1h-1zM1428 682h1v1h-1zM1436 682h1v1h-1zM1444 682h1v1h-1zM1451 682h1v1h-1zM1459 682h1v1h-1zM1467 682h1v1h-1zM1475 682h1v1h-1zM1482 682h1v1h-1zM1490 682h1v1h-1zM1498 682h1v1h-1zM1505 682h1v1h-1zM1513 682h1v1h-1zM1521 682h1v1h-1zM1529 682h1v1h-1zM1536 682h1v1h-1zM1544 682h1v1h-1zM1552 682h1v1h-1zM1559 682h1v1h-1zM1567 682h1v1h-1zM1575 682h1v1h-1zM1583 682h1v1h-1zM1590 682h1v1h-1zM1598 682h1v1h-1zM1606 682h1v1h-1zM1613 682h1v1h-1zM1621 682h1v1h-1zM1629 682h1v1h-1zM1637 682h1v1h-1zM1644 682h1v1h-1zM1652 682h1v1h-1zM1660 682h1v1h-1zM1668 682h1v1h-1zM1675 682h1v1h-1zM1683 682h1v1h-1zM1691 682h1v1h-1zM1698 682h1v1h-1zM1706 682h1v1h-1zM1714 682h1v1h-1zM1722 682h1v1h-1zM1729 682h1v1h-1zM1737 682h1v1h-1zM1745 682h1v1h-1zM1752 682h1v1h-1zM1760 682h1v1h-1zM1768 682h1v1h-1zM1776 682h1v1h-1zM1783 682h1v1h-1zM1791 682h1v1h-1zM1799 682h1v1h-1zM1806 682h1v1h-1zM1814 682h1v1h-1zM1822 682h1v1h-1zM1830 682h1v1h-1zM1837 682h1v1h-1zM1845 682h1v1h-1zM1853 682h1v1h-1zM1861 682h1v1h-1zM1868 682h1v1h-1zM1876 682h1v1h-1zM579 759h1v1h-1zM587 759h1v1h-1zM594 759h1v1h-1zM602 759h1v1h-1zM610 759h1v1h-1zM618 759h1v1h-1zM625 759h1v1h-1zM633 759h1v1h-1zM641 759h1v1h-1zM648 759h1v1h-1zM656 759h1v1h-1zM664 759h1v1h-1zM672 759h1v1h-1zM679 759h1v1h-1zM687 759h1v1h-1zM695 759h1v1h-1zM703 759h1v1h-1zM710 759h1v1h-1zM718 759h1v1h-1zM726 759h1v1h-1zM733 759h1v1h-1zM741 759h1v1h-1zM749 759h1v1h-1zM757 759h1v1h-1zM764 759h1v1h-1zM772 759h1v1h-1zM780 759h1v1h-1zM787 759h1v1h-1zM795 759h1v1h-1zM803 759h1v1h-1zM811 759h1v1h-1zM818 759h1v1h-1zM826 759h1v1h-1zM834 759h1v1h-1zM841 759h1v1h-1zM849 759h1v1h-1zM857 759h1v1h-1zM865 759h1v1h-1zM872 759h1v1h-1zM880 759h1v1h-1zM888 759h1v1h-1zM896 759h1v1h-1zM903 759h1v1h-1zM911 759h1v1h-1zM919 759h1v1h-1zM926 759h1v1h-1zM934 759h1v1h-1zM942 759h1v1h-1zM950 759h1v1h-1zM957 759h1v1h-1zM965 759h1v1h-1zM973 759h1v1h-1zM980 759h1v1h-1zM988 759h1v1h-1zM996 759h1v1h-1zM1004 759h1v1h-1zM1011 759h1v1h-1zM1019 759h1v1h-1zM1027 759h1v1h-1zM1034 759h1v1h-1zM1042 759h1v1h-1zM1050 759h1v1h-1zM1058 759h1v1h-1zM1065 759h1v1h-1zM1073 759h1v1h-1zM1081 759h1v1h-1zM1089 759h1v1h-1zM1096 759h1v1h-1zM1104 759h1v1h-1zM1112 759h1v1h-1zM1119 759h1v1h-1zM1127 759h1v1h-1zM1135 759h1v1h-1zM1143 759h1v1h-1zM1150 759h1v1h-1zM1158 759h1v1h-1zM1166 759h1v1h-1zM1173 759h1v1h-1zM1181 759h1v1h-1zM1189 759h1v1h-1zM1197 759h1v1h-1zM1204 759h1v1h-1zM1212 759h1v1h-1zM1220 759h1v1h-1zM1227 759h1v1h-1zM1235 759h1v1h-1zM1243 759h1v1h-1zM1251 759h1v1h-1zM1258 759h1v1h-1zM1266 759h1v1h-1zM1274 759h1v1h-1zM1282 759h1v1h-1zM1289 759h1v1h-1zM1297 759h1v1h-1zM1305 759h1v1h-1zM1312 759h1v1h-1zM1320 759h1v1h-1zM1328 759h1v1h-1zM1336 759h1v1h-1zM1343 759h1v1h-1zM1351 759h1v1h-1zM1359 759h1v1h-1zM1366 759h1v1h-1zM1374 759h1v1h-1zM1382 759h1v1h-1zM1390 759h1v1h-1zM1397 759h1v1h-1zM1405 759h1v1h-1zM1413 759h1v1h-1zM1420 759h1v1h-1zM1428 759h1v1h-1zM1436 759h1v1h-1zM1444 759h1v1h-1zM1451 759h1v1h-1zM1459 759h1v1h-1zM1467 759h1v1h-1zM1475 759h1v1h-1zM1482 759h1v1h-1zM1490 759h1v1h-1zM1498 759h1v1h-1zM1505 759h1v1h-1zM1513 759h1v1h-1zM1521 759h1v1h-1zM1529 759h1v1h-1zM1536 759h1v1h-1zM1544 759h1v1h-1zM1552 759h1v1h-1zM1559 759h1v1h-1zM1567 759h1v1h-1zM1575 759h1v1h-1zM1583 759h1v1h-1zM1590 759h1v1h-1zM1598 759h1v1h-1zM1606 759h1v1h-1zM1613 759h1v1h-1zM1621 759h1v1h-1zM1629 759h1v1h-1zM1637 759h1v1h-1zM1644 759h1v1h-1zM1652 759h1v1h-1zM1660 759h1v1h-1zM1668 759h1v1h-1zM1675 759h1v1h-1zM1683 759h1v1h-1zM1691 759h1v1h-1zM1698 759h1v1h-1zM1706 759h1v1h-1zM1714 759h1v1h-1zM1722 759h1v1h-1zM1729 759h1v1h-1zM1737 759h1v1h-1zM1745 759h1v1h-1zM1752 759h1v1h-1zM1760 759h1v1h-1zM1768 759h1v1h-1zM1776 759h1v1h-1zM1783 759h1v1h-1zM1791 759h1v1h-1zM1799 759h1v1h-1zM1806 759h1v1h-1zM1814 759h1v1h-1zM1822 759h1v1h-1zM1830 759h1v1h-1zM1837 759h1v1h-1zM1845 759h1v1h-1zM1853 759h1v1h-1zM1861 759h1v1h-1zM1868 759h1v1h-1zM1876 759h1v1h-1zM579 836h1v1h-1zM587 836h1v1h-1zM594 836h1v1h-1zM602 836h1v1h-1zM610 836h1v1h-1zM618 836h1v1h-1zM625 836h1v1h-1zM633 836h1v1h-1zM641 836h1v1h-1zM648 836h1v1h-1zM656 836h1v1h-1zM664 836h1v1h-1zM672 836h1v1h-1zM679 836h1v1h-1zM687 836h1v1h-1zM695 836h1v1h-1zM703 836h1v1h-1zM710 836h1v1h-1zM718 836h1v1h-1zM726 836h1v1h-1zM733 836h1v1h-1zM741 836h1v1h-1zM749 836h1v1h-1zM757 836h1v1h-1zM764 836h1v1h-1zM772 836h1v1h-1zM780 836h1v1h-1zM787 836h1v1h-1zM795 836h1v1h-1zM803 836h1v1h-1zM811 836h1v1h-1zM818 836h1v1h-1zM826 836h1v1h-1zM834 836h1v1h-1zM841 836h1v1h-1zM849 836h1v1h-1zM857 836h1v1h-1zM865 836h1v1h-1zM872 836h1v1h-1zM880 836h1v1h-1zM888 836h1v1h-1zM896 836h1v1h-1zM903 836h1v1h-1zM911 836h1v1h-1zM919 836h1v1h-1zM926 836h1v1h-1zM934 836h1v1h-1zM942 836h1v1h-1zM950 836h1v1h-1zM957 836h1v1h-1zM965 836h1v1h-1zM973 836h1v1h-1zM980 836h1v1h-1zM988 836h1v1h-1zM996 836h1v1h-1zM1004 836h1v1h-1zM1011 836h1v1h-1zM1019 836h1v1h-1zM1027 836h1v1h-1zM1034 836h1v1h-1zM1042 836h1v1h-1zM1050 836h1v1h-1zM1058 836h1v1h-1zM1065 836h1v1h-1zM1073 836h1v1h-1zM1081 836h1v1h-1zM1089 836h1v1h-1zM1096 836h1v1h-1zM1104 836h1v1h-1zM1112 836h1v1h-1zM1119 836h1v1h-1zM1127 836h1v1h-1zM1135 836h1v1h-1zM1143 836h1v1h-1zM1150 836h1v1h-1zM1158 836h1v1h-1zM1166 836h1v1h-1zM1173 836h1v1h-1zM1181 836h1v1h-1zM1189 836h1v1h-1zM1197 836h1v1h-1zM1204 836h1v1h-1zM1212 836h1v1h-1zM1220 836h1v1h-1zM1227 836h1v1h-1zM1235 836h1v1h-1zM1243 836h1v1h-1zM1251 836h1v1h-1zM1258 836h1v1h-1zM1266 836h1v1h-1zM1274 836h1v1h-1zM1282 836h1v1h-1zM1289 836h1v1h-1zM1297 836h1v1h-1zM1305 836h1v1h-1zM1312 836h1v1h-1zM1320 836h1v1h-1zM1328 836h1v1h-1zM1336 836h1v1h-1zM1343 836h1v1h-1zM1351 836h1v1h-1zM1359 836h1v1h-1zM1366 836h1v1h-1zM1374 836h1v1h-1zM1382 836h1v1h-1zM1390 836h1v1h-1zM1397 836h1v1h-1zM1405 836h1v1h-1zM1413 836h1v1h-1zM1420 836h1v1h-1zM1428 836h1v1h-1zM1436 836h1v1h-1zM1444 836h1v1h-1zM1451 836h1v1h-1zM1459 836h1v1h-1zM1467 836h1v1h-1zM1475 836h1v1h-1zM1482 836h1v1h-1zM1490 836h1v1h-1zM1498 836h1v1h-1zM1505 836h1v1h-1zM1513 836h1v1h-1zM1521 836h1v1h-1zM1529 836h1v1h-1zM1536 836h1v1h-1zM1544 836h1v1h-1zM1552 836h1v1h-1zM1559 836h1v1h-1zM1567 836h1v1h-1zM1575 836h1v1h-1zM1583 836h1v1h-1zM1590 836h1v1h-1zM1598 836h1v1h-1zM1606 836h1v1h-1zM1613 836h1v1h-1zM1621 836h1v1h-1zM1629 836h1v1h-1zM1637 836h1v1h-1zM1644 836h1v1h-1zM1652 836h1v1h-1zM1660 836h1v1h-1zM1668 836h1v1h-1zM1675 836h1v1h-1zM1683 836h1v1h-1zM1691 836h1v1h-1zM1698 836h1v1h-1zM1706 836h1v1h-1zM1714 836h1v1h-1zM1722 836h1v1h-1zM1729 836h1v1h-1zM1737 836h1v1h-1zM1745 836h1v1h-1zM1752 836h1v1h-1zM1760 836h1v1h-1zM1768 836h1v1h-1zM1776 836h1v1h-1zM1783 836h1v1h-1zM1791 836h1v1h-1zM1799 836h1v1h-1zM1806 836h1v1h-1zM1814 836h1v1h-1zM1822 836h1v1h-1zM1830 836h1v1h-1zM1837 836h1v1h-1zM1845 836h1v1h-1zM1853 836h1v1h-1zM1861 836h1v1h-1zM1868 836h1v1h-1zM1876 836h1v1h-1zM579 913h1v1h-1zM587 913h1v1h-1zM594 913h1v1h-1zM602 913h1v1h-1zM610 913h1v1h-1zM618 913h1v1h-1zM625 913h1v1h-1zM633 913h1v1h-1zM641 913h1v1h-1zM648 913h1v1h-1zM656 913h1v1h-1zM664 913h1v1h-1zM672 913h1v1h-1zM679 913h1v1h-1zM687 913h1v1h-1zM695 913h1v1h-1zM703 913h1v1h-1zM710 913h1v1h-1zM718 913h1v1h-1zM726 913h1v1h-1zM733 913h1v1h-1zM741 913h1v1h-1zM749 913h1v1h-1zM757 913h1v1h-1zM764 913h1v1h-1zM772 913h1v1h-1zM780 913h1v1h-1zM787 913h1v1h-1zM795 913h1v1h-1zM803 913h1v1h-1zM811 913h1v1h-1zM818 913h1v1h-1zM826 913h1v1h-1zM834 913h1v1h-1zM841 913h1v1h-1zM849 913h1v1h-1zM857 913h1v1h-1zM865 913h1v1h-1zM872 913h1v1h-1zM880 913h1v1h-1zM888 913h1v1h-1zM896 913h1v1h-1zM903 913h1v1h-1zM911 913h1v1h-1zM919 913h1v1h-1zM926 913h1v1h-1zM934 913h1v1h-1zM942 913h1v1h-1zM950 913h1v1h-1zM957 913h1v1h-1zM965 913h1v1h-1zM973 913h1v1h-1zM980 913h1v1h-1zM988 913h1v1h-1zM996 913h1v1h-1zM1004 913h1v1h-1zM1011 913h1v1h-1zM1019 913h1v1h-1zM1027 913h1v1h-1zM1034 913h1v1h-1zM1042 913h1v1h-1zM1050 913h1v1h-1zM1058 913h1v1h-1zM1065 913h1v1h-1zM1073 913h1v1h-1zM1081 913h1v1h-1zM1089 913h1v1h-1zM1096 913h1v1h-1zM1104 913h1v1h-1zM1112 913h1v1h-1zM1119 913h1v1h-1zM1127 913h1v1h-1zM1135 913h1v1h-1zM1143 913h1v1h-1zM1150 913h1v1h-1zM1158 913h1v1h-1zM1166 913h1v1h-1zM1173 913h1v1h-1zM1181 913h1v1h-1zM1189 913h1v1h-1zM1197 913h1v1h-1zM1204 913h1v1h-1zM1212 913h1v1h-1zM1220 913h1v1h-1zM1227 913h1v1h-1zM1235 913h1v1h-1zM1243 913h1v1h-1zM1251 913h1v1h-1zM1258 913h1v1h-1zM1266 913h1v1h-1zM1274 913h1v1h-1zM1282 913h1v1h-1zM1289 913h1v1h-1zM1297 913h1v1h-1zM1305 913h1v1h-1zM1312 913h1v1h-1zM1320 913h1v1h-1zM1328 913h1v1h-1zM1336 913h1v1h-1zM1343 913h1v1h-1zM1351 913h1v1h-1zM1359 913h1v1h-1zM1366 913h1v1h-1zM1374 913h1v1h-1zM1382 913h1v1h-1zM1390 913h1v1h-1zM1397 913h1v1h-1zM1405 913h1v1h-1zM1413 913h1v1h-1zM1420 913h1v1h-1zM1428 913h1v1h-1zM1436 913h1v1h-1zM1444 913h1v1h-1zM1451 913h1v1h-1zM1459 913h1v1h-1zM1467 913h1v1h-1zM1475 913h1v1h-1zM1482 913h1v1h-1zM1490 913h1v1h-1zM1498 913h1v1h-1zM1505 913h1v1h-1zM1513 913h1v1h-1zM1521 913h1v1h-1zM1529 913h1v1h-1zM1536 913h1v1h-1zM1544 913h1v1h-1zM1552 913h1v1h-1zM1559 913h1v1h-1zM1567 913h1v1h-1zM1575 913h1v1h-1zM1583 913h1v1h-1zM1590 913h1v1h-1zM1598 913h1v1h-1zM1606 913h1v1h-1zM1613 913h1v1h-1zM1621 913h1v1h-1zM1629 913h1v1h-1zM1637 913h1v1h-1zM1644 913h1v1h-1zM1652 913h1v1h-1zM1660 913h1v1h-1zM1668 913h1v1h-1zM1675 913h1v1h-1zM1683 913h1v1h-1zM1691 913h1v1h-1zM1698 913h1v1h-1zM1706 913h1v1h-1zM1714 913h1v1h-1zM1722 913h1v1h-1zM1729 913h1v1h-1zM1737 913h1v1h-1zM1745 913h1v1h-1zM1752 913h1v1h-1zM1760 913h1v1h-1zM1768 913h1v1h-1zM1776 913h1v1h-1zM1783 913h1v1h-1zM1791 913h1v1h-1zM1799 913h1v1h-1zM1806 913h1v1h-1zM1814 913h1v1h-1zM1822 913h1v1h-1zM1830 913h1v1h-1zM1837 913h1v1h-1zM1845 913h1v1h-1zM1853 913h1v1h-1zM1861 913h1v1h-1zM1868 913h1v1h-1zM1876 913h1v1h-1zM610 242h1v1h-1zM610 250h1v1h-1zM610 257h1v1h-1zM610 265h1v1h-1zM610 273h1v1h-1zM610 281h1v1h-1zM610 288h1v1h-1zM610 296h1v1h-1zM610 304h1v1h-1zM610 311h1v1h-1zM610 319h1v1h-1zM610 327h1v1h-1zM610 335h1v1h-1zM610 342h1v1h-1zM610 350h1v1h-1zM610 358h1v1h-1zM610 366h1v1h-1zM610 373h1v1h-1zM610 381h1v1h-1zM610 389h1v1h-1zM610 396h1v1h-1zM610 404h1v1h-1zM610 412h1v1h-1zM610 420h1v1h-1zM610 427h1v1h-1zM610 435h1v1h-1zM610 443h1v1h-1zM610 450h1v1h-1zM610 458h1v1h-1zM610 466h1v1h-1zM610 474h1v1h-1zM610 481h1v1h-1zM610 489h1v1h-1zM610 497h1v1h-1zM610 504h1v1h-1zM610 512h1v1h-1zM610 520h1v1h-1zM610 528h1v1h-1zM610 535h1v1h-1zM610 543h1v1h-1zM610 551h1v1h-1zM610 559h1v1h-1zM610 566h1v1h-1zM610 574h1v1h-1zM610 582h1v1h-1zM610 589h1v1h-1zM610 597h1v1h-1zM610 605h1v1h-1zM610 613h1v1h-1zM610 620h1v1h-1zM610 628h1v1h-1zM610 636h1v1h-1zM610 643h1v1h-1zM610 651h1v1h-1zM610 659h1v1h-1zM610 667h1v1h-1zM610 674h1v1h-1zM610 682h1v1h-1zM610 690h1v1h-1zM610 697h1v1h-1zM610 705h1v1h-1zM610 713h1v1h-1zM610 721h1v1h-1zM610 728h1v1h-1zM610 736h1v1h-1zM610 744h1v1h-1zM610 752h1v1h-1zM610 759h1v1h-1zM610 767h1v1h-1zM610 775h1v1h-1zM610 782h1v1h-1zM610 790h1v1h-1zM610 798h1v1h-1zM610 806h1v1h-1zM610 813h1v1h-1zM610 821h1v1h-1zM610 829h1v1h-1zM610 836h1v1h-1zM610 844h1v1h-1zM610 852h1v1h-1zM610 860h1v1h-1zM610 867h1v1h-1zM610 875h1v1h-1zM610 883h1v1h-1zM610 890h1v1h-1zM610 898h1v1h-1zM610 906h1v1h-1zM610 914h1v1h-1zM610 921h1v1h-1zM610 929h1v1h-1zM610 937h1v1h-1zM610 945h1v1h-1zM610 952h1v1h-1zM610 960h1v1h-1zM610 968h1v1h-1zM687 242h1v1h-1zM687 250h1v1h-1zM687 257h1v1h-1zM687 265h1v1h-1zM687 273h1v1h-1zM687 281h1v1h-1zM687 288h1v1h-1zM687 296h1v1h-1zM687 304h1v1h-1zM687 311h1v1h-1zM687 319h1v1h-1zM687 327h1v1h-1zM687 335h1v1h-1zM687 342h1v1h-1zM687 350h1v1h-1zM687 358h1v1h-1zM687 366h1v1h-1zM687 373h1v1h-1zM687 381h1v1h-1zM687 389h1v1h-1zM687 396h1v1h-1zM687 404h1v1h-1zM687 412h1v1h-1zM687 420h1v1h-1zM687 427h1v1h-1zM687 435h1v1h-1zM687 443h1v1h-1zM687 450h1v1h-1zM687 458h1v1h-1zM687 466h1v1h-1zM687 474h1v1h-1zM687 481h1v1h-1zM687 489h1v1h-1zM687 497h1v1h-1zM687 504h1v1h-1zM687 512h1v1h-1zM687 520h1v1h-1zM687 528h1v1h-1zM687 535h1v1h-1zM687 543h1v1h-1zM687 551h1v1h-1zM687 559h1v1h-1zM687 566h1v1h-1zM687 574h1v1h-1zM687 582h1v1h-1zM687 589h1v1h-1zM687 597h1v1h-1zM687 605h1v1h-1zM687 613h1v1h-1zM687 620h1v1h-1zM687 628h1v1h-1zM687 636h1v1h-1zM687 643h1v1h-1zM687 651h1v1h-1zM687 659h1v1h-1zM687 667h1v1h-1zM687 674h1v1h-1zM687 682h1v1h-1zM687 690h1v1h-1zM687 697h1v1h-1zM687 705h1v1h-1zM687 713h1v1h-1zM687 721h1v1h-1zM687 728h1v1h-1zM687 736h1v1h-1zM687 744h1v1h-1zM687 752h1v1h-1zM687 759h1v1h-1zM687 767h1v1h-1zM687 775h1v1h-1zM687 782h1v1h-1zM687 790h1v1h-1zM687 798h1v1h-1zM687 806h1v1h-1zM687 813h1v1h-1zM687 821h1v1h-1zM687 829h1v1h-1zM687 836h1v1h-1zM687 844h1v1h-1zM687 852h1v1h-1zM687 860h1v1h-1zM687 867h1v1h-1zM687 875h1v1h-1zM687 883h1v1h-1zM687 890h1v1h-1zM687 898h1v1h-1zM687 906h1v1h-1zM687 914h1v1h-1zM687 921h1v1h-1zM687 929h1v1h-1zM687 937h1v1h-1zM687 945h1v1h-1zM687 952h1v1h-1zM687 960h1v1h-1zM687 968h1v1h-1zM764 242h1v1h-1zM764 250h1v1h-1zM764 257h1v1h-1zM764 265h1v1h-1zM764 273h1v1h-1zM764 281h1v1h-1zM764 288h1v1h-1zM764 296h1v1h-1zM764 304h1v1h-1zM764 311h1v1h-1zM764 319h1v1h-1zM764 327h1v1h-1zM764 335h1v1h-1zM764 342h1v1h-1zM764 350h1v1h-1zM764 358h1v1h-1zM764 366h1v1h-1zM764 373h1v1h-1zM764 381h1v1h-1zM764 389h1v1h-1zM764 396h1v1h-1zM764 404h1v1h-1zM764 412h1v1h-1zM764 420h1v1h-1zM764 427h1v1h-1zM764 435h1v1h-1zM764 443h1v1h-1zM764 450h1v1h-1zM764 458h1v1h-1zM764 466h1v1h-1zM764 474h1v1h-1zM764 481h1v1h-1zM764 489h1v1h-1zM764 497h1v1h-1zM764 504h1v1h-1zM764 512h1v1h-1zM764 520h1v1h-1zM764 528h1v1h-1zM764 535h1v1h-1zM764 543h1v1h-1zM764 551h1v1h-1zM764 559h1v1h-1zM764 566h1v1h-1zM764 574h1v1h-1zM764 582h1v1h-1zM764 589h1v1h-1zM764 597h1v1h-1zM764 605h1v1h-1zM764 613h1v1h-1zM764 620h1v1h-1zM764 628h1v1h-1zM764 636h1v1h-1zM764 643h1v1h-1zM764 651h1v1h-1zM764 659h1v1h-1zM764 667h1v1h-1zM764 674h1v1h-1zM764 682h1v1h-1zM764 690h1v1h-1zM764 697h1v1h-1zM764 705h1v1h-1zM764 713h1v1h-1zM764 721h1v1h-1zM764 728h1v1h-1zM764 736h1v1h-1zM764 744h1v1h-1zM764 752h1v1h-1zM764 759h1v1h-1zM764 767h1v1h-1zM764 775h1v1h-1zM764 782h1v1h-1zM764 790h1v1h-1zM764 798h1v1h-1zM764 806h1v1h-1zM764 813h1v1h-1zM764 821h1v1h-1zM764 829h1v1h-1zM764 836h1v1h-1zM764 844h1v1h-1zM764 852h1v1h-1zM764 860h1v1h-1zM764 867h1v1h-1zM764 875h1v1h-1zM764 883h1v1h-1zM764 890h1v1h-1zM764 898h1v1h-1zM764 906h1v1h-1zM764 914h1v1h-1zM764 921h1v1h-1zM764 929h1v1h-1zM764 937h1v1h-1zM764 945h1v1h-1zM764 952h1v1h-1zM764 960h1v1h-1zM764 968h1v1h-1zM841 242h1v1h-1zM841 250h1v1h-1zM841 257h1v1h-1zM841 265h1v1h-1zM841 273h1v1h-1zM841 281h1v1h-1zM841 288h1v1h-1zM841 296h1v1h-1zM841 304h1v1h-1zM841 311h1v1h-1zM841 319h1v1h-1zM841 327h1v1h-1zM841 335h1v1h-1zM841 342h1v1h-1zM841 350h1v1h-1zM841 358h1v1h-1zM841 366h1v1h-1zM841 373h1v1h-1zM841 381h1v1h-1zM841 389h1v1h-1zM841 396h1v1h-1zM841 404h1v1h-1zM841 412h1v1h-1zM841 420h1v1h-1zM841 427h1v1h-1zM841 435h1v1h-1zM841 443h1v1h-1zM841 450h1v1h-1zM841 458h1v1h-1zM841 466h1v1h-1zM841 474h1v1h-1zM841 481h1v1h-1zM841 489h1v1h-1zM841 497h1v1h-1zM841 504h1v1h-1zM841 512h1v1h-1zM841 520h1v1h-1zM841 528h1v1h-1zM841 535h1v1h-1zM841 543h1v1h-1zM841 551h1v1h-1zM841 559h1v1h-1zM841 566h1v1h-1zM841 574h1v1h-1zM841 582h1v1h-1zM841 589h1v1h-1zM841 597h1v1h-1zM841 605h1v1h-1zM841 613h1v1h-1zM841 620h1v1h-1zM841 628h1v1h-1zM841 636h1v1h-1zM841 643h1v1h-1zM841 651h1v1h-1zM841 659h1v1h-1zM841 667h1v1h-1zM841 674h1v1h-1zM841 682h1v1h-1zM841 690h1v1h-1zM841 697h1v1h-1zM841 705h1v1h-1zM841 713h1v1h-1zM841 721h1v1h-1zM841 728h1v1h-1zM841 736h1v1h-1zM841 744h1v1h-1zM841 752h1v1h-1zM841 759h1v1h-1zM841 767h1v1h-1zM841 775h1v1h-1zM841 782h1v1h-1zM841 790h1v1h-1zM841 798h1v1h-1zM841 806h1v1h-1zM841 813h1v1h-1zM841 821h1v1h-1zM841 829h1v1h-1zM841 836h1v1h-1zM841 844h1v1h-1zM841 852h1v1h-1zM841 860h1v1h-1zM841 867h1v1h-1zM841 875h1v1h-1zM841 883h1v1h-1zM841 890h1v1h-1zM841 898h1v1h-1zM841 906h1v1h-1zM841 914h1v1h-1zM841 921h1v1h-1zM841 929h1v1h-1zM841 937h1v1h-1zM841 945h1v1h-1zM841 952h1v1h-1zM841 960h1v1h-1zM841 968h1v1h-1zM919 242h1v1h-1zM919 250h1v1h-1zM919 257h1v1h-1zM919 265h1v1h-1zM919 273h1v1h-1zM919 281h1v1h-1zM919 288h1v1h-1zM919 296h1v1h-1zM919 304h1v1h-1zM919 311h1v1h-1zM919 319h1v1h-1zM919 327h1v1h-1zM919 335h1v1h-1zM919 342h1v1h-1zM919 350h1v1h-1zM919 358h1v1h-1zM919 366h1v1h-1zM919 373h1v1h-1zM919 381h1v1h-1zM919 389h1v1h-1zM919 396h1v1h-1zM919 404h1v1h-1zM919 412h1v1h-1zM919 420h1v1h-1zM919 427h1v1h-1zM919 435h1v1h-1zM919 443h1v1h-1zM919 450h1v1h-1zM919 458h1v1h-1zM919 466h1v1h-1zM919 474h1v1h-1zM919 481h1v1h-1zM919 489h1v1h-1zM919 497h1v1h-1zM919 504h1v1h-1zM919 512h1v1h-1zM919 520h1v1h-1zM919 528h1v1h-1zM919 535h1v1h-1zM919 543h1v1h-1zM919 551h1v1h-1zM919 559h1v1h-1zM919 566h1v1h-1zM919 574h1v1h-1zM919 582h1v1h-1zM919 589h1v1h-1zM919 597h1v1h-1zM919 605h1v1h-1zM919 613h1v1h-1zM919 620h1v1h-1zM919 628h1v1h-1zM919 636h1v1h-1zM919 643h1v1h-1zM919 651h1v1h-1zM919 659h1v1h-1zM919 667h1v1h-1zM919 674h1v1h-1zM919 682h1v1h-1zM919 690h1v1h-1zM919 697h1v1h-1zM919 705h1v1h-1zM919 713h1v1h-1zM919 721h1v1h-1zM919 728h1v1h-1zM919 736h1v1h-1zM919 744h1v1h-1zM919 752h1v1h-1zM919 759h1v1h-1zM919 767h1v1h-1zM919 775h1v1h-1zM919 782h1v1h-1zM919 790h1v1h-1zM919 798h1v1h-1zM919 806h1v1h-1zM919 813h1v1h-1zM919 821h1v1h-1zM919 829h1v1h-1zM919 836h1v1h-1zM919 844h1v1h-1zM919 852h1v1h-1zM919 860h1v1h-1zM919 867h1v1h-1zM919 875h1v1h-1zM919 883h1v1h-1zM919 890h1v1h-1zM919 898h1v1h-1zM919 906h1v1h-1zM919 914h1v1h-1zM919 921h1v1h-1zM919 929h1v1h-1zM919 937h1v1h-1zM919 945h1v1h-1zM919 952h1v1h-1zM919 960h1v1h-1zM919 968h1v1h-1zM996 242h1v1h-1zM996 250h1v1h-1zM996 257h1v1h-1zM996 265h1v1h-1zM996 273h1v1h-1zM996 281h1v1h-1zM996 288h1v1h-1zM996 296h1v1h-1zM996 304h1v1h-1zM996 311h1v1h-1zM996 319h1v1h-1zM996 327h1v1h-1zM996 335h1v1h-1zM996 342h1v1h-1zM996 350h1v1h-1zM996 358h1v1h-1zM996 366h1v1h-1zM996 373h1v1h-1zM996 381h1v1h-1zM996 389h1v1h-1zM996 396h1v1h-1zM996 404h1v1h-1zM996 412h1v1h-1zM996 420h1v1h-1zM996 427h1v1h-1zM996 435h1v1h-1zM996 443h1v1h-1zM996 450h1v1h-1zM996 458h1v1h-1zM996 466h1v1h-1zM996 474h1v1h-1zM996 481h1v1h-1zM996 489h1v1h-1zM996 497h1v1h-1zM996 504h1v1h-1zM996 512h1v1h-1zM996 520h1v1h-1zM996 528h1v1h-1zM996 535h1v1h-1zM996 543h1v1h-1zM996 551h1v1h-1zM996 559h1v1h-1zM996 566h1v1h-1zM996 574h1v1h-1zM996 582h1v1h-1zM996 589h1v1h-1zM996 597h1v1h-1zM996 605h1v1h-1zM996 613h1v1h-1zM996 620h1v1h-1zM996 628h1v1h-1zM996 636h1v1h-1zM996 643h1v1h-1zM996 651h1v1h-1zM996 659h1v1h-1zM996 667h1v1h-1zM996 674h1v1h-1zM996 682h1v1h-1zM996 690h1v1h-1zM996 697h1v1h-1zM996 705h1v1h-1zM996 713h1v1h-1zM996 721h1v1h-1zM996 728h1v1h-1zM996 736h1v1h-1zM996 744h1v1h-1zM996 752h1v1h-1zM996 759h1v1h-1zM996 767h1v1h-1zM996 775h1v1h-1zM996 782h1v1h-1zM996 790h1v1h-1zM996 798h1v1h-1zM996 806h1v1h-1zM996 813h1v1h-1zM996 821h1v1h-1zM996 829h1v1h-1zM996 836h1v1h-1zM996 844h1v1h-1zM996 852h1v1h-1zM996 860h1v1h-1zM996 867h1v1h-1zM996 875h1v1h-1zM996 883h1v1h-1zM996 890h1v1h-1zM996 898h1v1h-1zM996 906h1v1h-1zM996 914h1v1h-1zM996 921h1v1h-1zM996 929h1v1h-1zM996 937h1v1h-1zM996 945h1v1h-1zM996 952h1v1h-1zM996 960h1v1h-1zM996 968h1v1h-1zM1073 242h1v1h-1zM1073 250h1v1h-1zM1073 257h1v1h-1zM1073 265h1v1h-1zM1073 273h1v1h-1zM1073 281h1v1h-1zM1073 288h1v1h-1zM1073 296h1v1h-1zM1073 304h1v1h-1zM1073 311h1v1h-1zM1073 319h1v1h-1zM1073 327h1v1h-1zM1073 335h1v1h-1zM1073 342h1v1h-1zM1073 350h1v1h-1zM1073 358h1v1h-1zM1073 366h1v1h-1zM1073 373h1v1h-1zM1073 381h1v1h-1zM1073 389h1v1h-1zM1073 396h1v1h-1zM1073 404h1v1h-1zM1073 412h1v1h-1zM1073 420h1v1h-1zM1073 427h1v1h-1zM1073 435h1v1h-1zM1073 443h1v1h-1zM1073 450h1v1h-1zM1073 458h1v1h-1zM1073 466h1v1h-1zM1073 474h1v1h-1zM1073 481h1v1h-1zM1073 489h1v1h-1zM1073 497h1v1h-1zM1073 504h1v1h-1zM1073 512h1v1h-1zM1073 520h1v1h-1zM1073 528h1v1h-1zM1073 535h1v1h-1zM1073 543h1v1h-1zM1073 551h1v1h-1zM1073 559h1v1h-1zM1073 566h1v1h-1zM1073 574h1v1h-1zM1073 582h1v1h-1zM1073 589h1v1h-1zM1073 597h1v1h-1zM1073 605h1v1h-1zM1073 613h1v1h-1zM1073 620h1v1h-1zM1073 628h1v1h-1zM1073 636h1v1h-1zM1073 643h1v1h-1zM1073 651h1v1h-1zM1073 659h1v1h-1zM1073 667h1v1h-1zM1073 674h1v1h-1zM1073 682h1v1h-1zM1073 690h1v1h-1zM1073 697h1v1h-1zM1073 705h1v1h-1zM1073 713h1v1h-1zM1073 721h1v1h-1zM1073 728h1v1h-1zM1073 736h1v1h-1zM1073 744h1v1h-1zM1073 752h1v1h-1zM1073 759h1v1h-1zM1073 767h1v1h-1zM1073 775h1v1h-1zM1073 782h1v1h-1zM1073 790h1v1h-1zM1073 798h1v1h-1zM1073 806h1v1h-1zM1073 813h1v1h-1zM1073 821h1v1h-1zM1073 829h1v1h-1zM1073 836h1v1h-1zM1073 844h1v1h-1zM1073 852h1v1h-1zM1073 860h1v1h-1zM1073 867h1v1h-1zM1073 875h1v1h-1zM1073 883h1v1h-1zM1073 890h1v1h-1zM1073 898h1v1h-1zM1073 906h1v1h-1zM1073 914h1v1h-1zM1073 921h1v1h-1zM1073 929h1v1h-1zM1073 937h1v1h-1zM1073 945h1v1h-1zM1073 952h1v1h-1zM1073 960h1v1h-1zM1073 968h1v1h-1zM1150 242h1v1h-1zM1150 250h1v1h-1zM1150 257h1v1h-1zM1150 265h1v1h-1zM1150 273h1v1h-1zM1150 281h1v1h-1zM1150 288h1v1h-1zM1150 296h1v1h-1zM1150 304h1v1h-1zM1150 311h1v1h-1zM1150 319h1v1h-1zM1150 327h1v1h-1zM1150 335h1v1h-1zM1150 342h1v1h-1zM1150 350h1v1h-1zM1150 358h1v1h-1zM1150 366h1v1h-1zM1150 373h1v1h-1zM1150 381h1v1h-1zM1150 389h1v1h-1zM1150 396h1v1h-1zM1150 404h1v1h-1zM1150 412h1v1h-1zM1150 420h1v1h-1zM1150 427h1v1h-1zM1150 435h1v1h-1zM1150 443h1v1h-1zM1150 450h1v1h-1zM1150 458h1v1h-1zM1150 466h1v1h-1zM1150 474h1v1h-1zM1150 481h1v1h-1zM1150 489h1v1h-1zM1150 497h1v1h-1zM1150 504h1v1h-1zM1150 512h1v1h-1zM1150 520h1v1h-1zM1150 528h1v1h-1zM1150 535h1v1h-1zM1150 543h1v1h-1zM1150 551h1v1h-1zM1150 559h1v1h-1zM1150 566h1v1h-1zM1150 574h1v1h-1zM1150 582h1v1h-1zM1150 589h1v1h-1zM1150 597h1v1h-1zM1150 605h1v1h-1zM1150 613h1v1h-1zM1150 620h1v1h-1zM1150 628h1v1h-1zM1150 636h1v1h-1zM1150 643h1v1h-1zM1150 651h1v1h-1zM1150 659h1v1h-1zM1150 667h1v1h-1zM1150 674h1v1h-1zM1150 682h1v1h-1zM1150 690h1v1h-1zM1150 697h1v1h-1zM1150 705h1v1h-1zM1150 713h1v1h-1zM1150 721h1v1h-1zM1150 728h1v1h-1zM1150 736h1v1h-1zM1150 744h1v1h-1zM1150 752h1v1h-1zM1150 759h1v1h-1zM1150 767h1v1h-1zM1150 775h1v1h-1zM1150 782h1v1h-1zM1150 790h1v1h-1zM1150 798h1v1h-1zM1150 806h1v1h-1zM1150 813h1v1h-1zM1150 821h1v1h-1zM1150 829h1v1h-1zM1150 836h1v1h-1zM1150 844h1v1h-1zM1150 852h1v1h-1zM1150 860h1v1h-1zM1150 867h1v1h-1zM1150 875h1v1h-1zM1150 883h1v1h-1zM1150 890h1v1h-1zM1150 898h1v1h-1zM1150 906h1v1h-1zM1150 914h1v1h-1zM1150 921h1v1h-1zM1150 929h1v1h-1zM1150 937h1v1h-1zM1150 945h1v1h-1zM1150 952h1v1h-1zM1150 960h1v1h-1zM1150 968h1v1h-1zM1227 242h1v1h-1zM1227 250h1v1h-1zM1227 257h1v1h-1zM1227 265h1v1h-1zM1227 273h1v1h-1zM1227 281h1v1h-1zM1227 288h1v1h-1zM1227 296h1v1h-1zM1227 304h1v1h-1zM1227 311h1v1h-1zM1227 319h1v1h-1zM1227 327h1v1h-1zM1227 335h1v1h-1zM1227 342h1v1h-1zM1227 350h1v1h-1zM1227 358h1v1h-1zM1227 366h1v1h-1zM1227 373h1v1h-1zM1227 381h1v1h-1zM1227 389h1v1h-1zM1227 396h1v1h-1zM1227 404h1v1h-1zM1227 412h1v1h-1zM1227 420h1v1h-1zM1227 427h1v1h-1zM1227 435h1v1h-1zM1227 443h1v1h-1zM1227 450h1v1h-1zM1227 458h1v1h-1zM1227 466h1v1h-1zM1227 474h1v1h-1zM1227 481h1v1h-1zM1227 489h1v1h-1zM1227 497h1v1h-1zM1227 504h1v1h-1zM1227 512h1v1h-1zM1227 520h1v1h-1zM1227 528h1v1h-1zM1227 535h1v1h-1zM1227 543h1v1h-1zM1227 551h1v1h-1zM1227 559h1v1h-1zM1227 566h1v1h-1zM1227 574h1v1h-1zM1227 582h1v1h-1zM1227 589h1v1h-1zM1227 597h1v1h-1zM1227 605h1v1h-1zM1227 613h1v1h-1zM1227 620h1v1h-1zM1227 628h1v1h-1zM1227 636h1v1h-1zM1227 643h1v1h-1zM1227 651h1v1h-1zM1227 659h1v1h-1zM1227 667h1v1h-1zM1227 674h1v1h-1zM1227 682h1v1h-1zM1227 690h1v1h-1zM1227 697h1v1h-1zM1227 705h1v1h-1zM1227 713h1v1h-1zM1227 721h1v1h-1zM1227 728h1v1h-1zM1227 736h1v1h-1zM1227 744h1v1h-1zM1227 752h1v1h-1zM1227 759h1v1h-1zM1227 767h1v1h-1zM1227 775h1v1h-1zM1227 782h1v1h-1zM1227 790h1v1h-1zM1227 798h1v1h-1zM1227 806h1v1h-1zM1227 813h1v1h-1zM1227 821h1v1h-1zM1227 829h1v1h-1zM1227 836h1v1h-1zM1227 844h1v1h-1zM1227 852h1v1h-1zM1227 860h1v1h-1zM1227 867h1v1h-1zM1227 875h1v1h-1zM1227 883h1v1h-1zM1227 890h1v1h-1zM1227 898h1v1h-1zM1227 906h1v1h-1zM1227 914h1v1h-1zM1227 921h1v1h-1zM1227 929h1v1h-1zM1227 937h1v1h-1zM1227 945h1v1h-1zM1227 952h1v1h-1zM1227 960h1v1h-1zM1227 968h1v1h-1zM1305 242h1v1h-1zM1305 250h1v1h-1zM1305 257h1v1h-1zM1305 265h1v1h-1zM1305 273h1v1h-1zM1305 281h1v1h-1zM1305 288h1v1h-1zM1305 296h1v1h-1zM1305 304h1v1h-1zM1305 311h1v1h-1zM1305 319h1v1h-1zM1305 327h1v1h-1zM1305 335h1v1h-1zM1305 342h1v1h-1zM1305 350h1v1h-1zM1305 358h1v1h-1zM1305 366h1v1h-1zM1305 373h1v1h-1zM1305 381h1v1h-1zM1305 389h1v1h-1zM1305 396h1v1h-1zM1305 404h1v1h-1zM1305 412h1v1h-1zM1305 420h1v1h-1zM1305 427h1v1h-1zM1305 435h1v1h-1zM1305 443h1v1h-1zM1305 450h1v1h-1zM1305 458h1v1h-1zM1305 466h1v1h-1zM1305 474h1v1h-1zM1305 481h1v1h-1zM1305 489h1v1h-1zM1305 497h1v1h-1zM1305 504h1v1h-1zM1305 512h1v1h-1zM1305 520h1v1h-1zM1305 528h1v1h-1zM1305 535h1v1h-1zM1305 543h1v1h-1zM1305 551h1v1h-1zM1305 559h1v1h-1zM1305 566h1v1h-1zM1305 574h1v1h-1zM1305 582h1v1h-1zM1305 589h1v1h-1zM1305 597h1v1h-1zM1305 605h1v1h-1zM1305 613h1v1h-1zM1305 620h1v1h-1zM1305 628h1v1h-1zM1305 636h1v1h-1zM1305 643h1v1h-1zM1305 651h1v1h-1zM1305 659h1v1h-1zM1305 667h1v1h-1zM1305 674h1v1h-1zM1305 682h1v1h-1zM1305 690h1v1h-1zM1305 697h1v1h-1zM1305 705h1v1h-1zM1305 713h1v1h-1zM1305 721h1v1h-1zM1305 728h1v1h-1zM1305 736h1v1h-1zM1305 744h1v1h-1zM1305 752h1v1h-1zM1305 759h1v1h-1zM1305 767h1v1h-1zM1305 775h1v1h-1zM1305 782h1v1h-1zM1305 790h1v1h-1zM1305 798h1v1h-1zM1305 806h1v1h-1zM1305 813h1v1h-1zM1305 821h1v1h-1zM1305 829h1v1h-1zM1305 836h1v1h-1zM1305 844h1v1h-1zM1305 852h1v1h-1zM1305 860h1v1h-1zM1305 867h1v1h-1zM1305 875h1v1h-1zM1305 883h1v1h-1zM1305 890h1v1h-1zM1305 898h1v1h-1zM1305 906h1v1h-1zM1305 914h1v1h-1zM1305 921h1v1h-1zM1305 929h1v1h-1zM1305 937h1v1h-1zM1305 945h1v1h-1zM1305 952h1v1h-1zM1305 960h1v1h-1zM1305 968h1v1h-1zM1382 242h1v1h-1zM1382 250h1v1h-1zM1382 257h1v1h-1zM1382 265h1v1h-1zM1382 273h1v1h-1zM1382 281h1v1h-1zM1382 288h1v1h-1zM1382 296h1v1h-1zM1382 304h1v1h-1zM1382 311h1v1h-1zM1382 319h1v1h-1zM1382 327h1v1h-1zM1382 335h1v1h-1zM1382 342h1v1h-1zM1382 350h1v1h-1zM1382 358h1v1h-1zM1382 366h1v1h-1zM1382 373h1v1h-1zM1382 381h1v1h-1zM1382 389h1v1h-1zM1382 396h1v1h-1zM1382 404h1v1h-1zM1382 412h1v1h-1zM1382 420h1v1h-1zM1382 427h1v1h-1zM1382 435h1v1h-1zM1382 443h1v1h-1zM1382 450h1v1h-1zM1382 458h1v1h-1zM1382 466h1v1h-1zM1382 474h1v1h-1zM1382 481h1v1h-1zM1382 489h1v1h-1zM1382 497h1v1h-1zM1382 504h1v1h-1zM1382 512h1v1h-1zM1382 520h1v1h-1zM1382 528h1v1h-1zM1382 535h1v1h-1zM1382 543h1v1h-1zM1382 551h1v1h-1zM1382 559h1v1h-1zM1382 566h1v1h-1zM1382 574h1v1h-1zM1382 582h1v1h-1zM1382 589h1v1h-1zM1382 597h1v1h-1zM1382 605h1v1h-1zM1382 613h1v1h-1zM1382 620h1v1h-1zM1382 628h1v1h-1zM1382 636h1v1h-1zM1382 643h1v1h-1zM1382 651h1v1h-1zM1382 659h1v1h-1zM1382 667h1v1h-1zM1382 674h1v1h-1zM1382 682h1v1h-1zM1382 690h1v1h-1zM1382 697h1v1h-1zM1382 705h1v1h-1zM1382 713h1v1h-1zM1382 721h1v1h-1zM1382 728h1v1h-1zM1382 736h1v1h-1zM1382 744h1v1h-1zM1382 752h1v1h-1zM1382 759h1v1h-1zM1382 767h1v1h-1zM1382 775h1v1h-1zM1382 782h1v1h-1zM1382 790h1v1h-1zM1382 798h1v1h-1zM1382 806h1v1h-1zM1382 813h1v1h-1zM1382 821h1v1h-1zM1382 829h1v1h-1zM1382 836h1v1h-1zM1382 844h1v1h-1zM1382 852h1v1h-1zM1382 860h1v1h-1zM1382 867h1v1h-1zM1382 875h1v1h-1zM1382 883h1v1h-1zM1382 890h1v1h-1zM1382 898h1v1h-1zM1382 906h1v1h-1zM1382 914h1v1h-1zM1382 921h1v1h-1zM1382 929h1v1h-1zM1382 937h1v1h-1zM1382 945h1v1h-1zM1382 952h1v1h-1zM1382 960h1v1h-1zM1382 968h1v1h-1zM1459 242h1v1h-1zM1459 250h1v1h-1zM1459 257h1v1h-1zM1459 265h1v1h-1zM1459 273h1v1h-1zM1459 281h1v1h-1zM1459 288h1v1h-1zM1459 296h1v1h-1zM1459 304h1v1h-1zM1459 311h1v1h-1zM1459 319h1v1h-1zM1459 327h1v1h-1zM1459 335h1v1h-1zM1459 342h1v1h-1zM1459 350h1v1h-1zM1459 358h1v1h-1zM1459 366h1v1h-1zM1459 373h1v1h-1zM1459 381h1v1h-1zM1459 389h1v1h-1zM1459 396h1v1h-1zM1459 404h1v1h-1zM1459 412h1v1h-1zM1459 420h1v1h-1zM1459 427h1v1h-1zM1459 435h1v1h-1zM1459 443h1v1h-1zM1459 450h1v1h-1zM1459 458h1v1h-1zM1459 466h1v1h-1zM1459 474h1v1h-1zM1459 481h1v1h-1zM1459 489h1v1h-1zM1459 497h1v1h-1zM1459 504h1v1h-1zM1459 512h1v1h-1zM1459 520h1v1h-1zM1459 528h1v1h-1zM1459 535h1v1h-1zM1459 543h1v1h-1zM1459 551h1v1h-1zM1459 559h1v1h-1zM1459 566h1v1h-1zM1459 574h1v1h-1zM1459 582h1v1h-1zM1459 589h1v1h-1zM1459 597h1v1h-1zM1459 605h1v1h-1zM1459 613h1v1h-1zM1459 620h1v1h-1zM1459 628h1v1h-1zM1459 636h1v1h-1zM1459 643h1v1h-1zM1459 651h1v1h-1zM1459 659h1v1h-1zM1459 667h1v1h-1zM1459 674h1v1h-1zM1459 682h1v1h-1zM1459 690h1v1h-1zM1459 697h1v1h-1zM1459 705h1v1h-1zM1459 713h1v1h-1zM1459 721h1v1h-1zM1459 728h1v1h-1zM1459 736h1v1h-1zM1459 744h1v1h-1zM1459 752h1v1h-1zM1459 759h1v1h-1zM1459 767h1v1h-1zM1459 775h1v1h-1zM1459 782h1v1h-1zM1459 790h1v1h-1zM1459 798h1v1h-1zM1459 806h1v1h-1zM1459 813h1v1h-1zM1459 821h1v1h-1zM1459 829h1v1h-1zM1459 836h1v1h-1zM1459 844h1v1h-1zM1459 852h1v1h-1zM1459 860h1v1h-1zM1459 867h1v1h-1zM1459 875h1v1h-1zM1459 883h1v1h-1zM1459 890h1v1h-1zM1459 898h1v1h-1zM1459 906h1v1h-1zM1459 914h1v1h-1zM1459 921h1v1h-1zM1459 929h1v1h-1zM1459 937h1v1h-1zM1459 945h1v1h-1zM1459 952h1v1h-1zM1459 960h1v1h-1zM1459 968h1v1h-1zM1536 242h1v1h-1zM1536 250h1v1h-1zM1536 257h1v1h-1zM1536 265h1v1h-1zM1536 273h1v1h-1zM1536 281h1v1h-1zM1536 288h1v1h-1zM1536 296h1v1h-1zM1536 304h1v1h-1zM1536 311h1v1h-1zM1536 319h1v1h-1zM1536 327h1v1h-1zM1536 335h1v1h-1zM1536 342h1v1h-1zM1536 350h1v1h-1zM1536 358h1v1h-1zM1536 366h1v1h-1zM1536 373h1v1h-1zM1536 381h1v1h-1zM1536 389h1v1h-1zM1536 396h1v1h-1zM1536 404h1v1h-1zM1536 412h1v1h-1zM1536 420h1v1h-1zM1536 427h1v1h-1zM1536 435h1v1h-1zM1536 443h1v1h-1zM1536 450h1v1h-1zM1536 458h1v1h-1zM1536 466h1v1h-1zM1536 474h1v1h-1zM1536 481h1v1h-1zM1536 489h1v1h-1zM1536 497h1v1h-1zM1536 504h1v1h-1zM1536 512h1v1h-1zM1536 520h1v1h-1zM1536 528h1v1h-1zM1536 535h1v1h-1zM1536 543h1v1h-1zM1536 551h1v1h-1zM1536 559h1v1h-1zM1536 566h1v1h-1zM1536 574h1v1h-1zM1536 582h1v1h-1zM1536 589h1v1h-1zM1536 597h1v1h-1zM1536 605h1v1h-1zM1536 613h1v1h-1zM1536 620h1v1h-1zM1536 628h1v1h-1zM1536 636h1v1h-1zM1536 643h1v1h-1zM1536 651h1v1h-1zM1536 659h1v1h-1zM1536 667h1v1h-1zM1536 674h1v1h-1zM1536 682h1v1h-1zM1536 690h1v1h-1zM1536 697h1v1h-1zM1536 705h1v1h-1zM1536 713h1v1h-1zM1536 721h1v1h-1zM1536 728h1v1h-1zM1536 736h1v1h-1zM1536 744h1v1h-1zM1536 752h1v1h-1zM1536 759h1v1h-1zM1536 767h1v1h-1zM1536 775h1v1h-1zM1536 782h1v1h-1zM1536 790h1v1h-1zM1536 798h1v1h-1zM1536 806h1v1h-1zM1536 813h1v1h-1zM1536 821h1v1h-1zM1536 829h1v1h-1zM1536 836h1v1h-1zM1536 844h1v1h-1zM1536 852h1v1h-1zM1536 860h1v1h-1zM1536 867h1v1h-1zM1536 875h1v1h-1zM1536 883h1v1h-1zM1536 890h1v1h-1zM1536 898h1v1h-1zM1536 906h1v1h-1zM1536 914h1v1h-1zM1536 921h1v1h-1zM1536 929h1v1h-1zM1536 937h1v1h-1zM1536 945h1v1h-1zM1536 952h1v1h-1zM1536 960h1v1h-1zM1536 968h1v1h-1zM1613 242h1v1h-1zM1613 250h1v1h-1zM1613 257h1v1h-1zM1613 265h1v1h-1zM1613 273h1v1h-1zM1613 281h1v1h-1zM1613 288h1v1h-1zM1613 296h1v1h-1zM1613 304h1v1h-1zM1613 311h1v1h-1zM1613 319h1v1h-1zM1613 327h1v1h-1zM1613 335h1v1h-1zM1613 342h1v1h-1zM1613 350h1v1h-1zM1613 358h1v1h-1zM1613 366h1v1h-1zM1613 373h1v1h-1zM1613 381h1v1h-1zM1613 389h1v1h-1zM1613 396h1v1h-1zM1613 404h1v1h-1zM1613 412h1v1h-1zM1613 420h1v1h-1zM1613 427h1v1h-1zM1613 435h1v1h-1zM1613 443h1v1h-1zM1613 450h1v1h-1zM1613 458h1v1h-1zM1613 466h1v1h-1zM1613 474h1v1h-1zM1613 481h1v1h-1zM1613 489h1v1h-1zM1613 497h1v1h-1zM1613 504h1v1h-1zM1613 512h1v1h-1zM1613 520h1v1h-1zM1613 528h1v1h-1zM1613 535h1v1h-1zM1613 543h1v1h-1zM1613 551h1v1h-1zM1613 559h1v1h-1zM1613 566h1v1h-1zM1613 574h1v1h-1zM1613 582h1v1h-1zM1613 589h1v1h-1zM1613 597h1v1h-1zM1613 605h1v1h-1zM1613 613h1v1h-1zM1613 620h1v1h-1zM1613 628h1v1h-1zM1613 636h1v1h-1zM1613 643h1v1h-1zM1613 651h1v1h-1zM1613 659h1v1h-1zM1613 667h1v1h-1zM1613 674h1v1h-1zM1613 682h1v1h-1zM1613 690h1v1h-1zM1613 697h1v1h-1zM1613 705h1v1h-1zM1613 713h1v1h-1zM1613 721h1v1h-1zM1613 728h1v1h-1zM1613 736h1v1h-1zM1613 744h1v1h-1zM1613 752h1v1h-1zM1613 759h1v1h-1zM1613 767h1v1h-1zM1613 775h1v1h-1zM1613 782h1v1h-1zM1613 790h1v1h-1zM1613 798h1v1h-1zM1613 806h1v1h-1zM1613 813h1v1h-1zM1613 821h1v1h-1zM1613 829h1v1h-1zM1613 836h1v1h-1zM1613 844h1v1h-1zM1613 852h1v1h-1zM1613 860h1v1h-1zM1613 867h1v1h-1zM1613 875h1v1h-1zM1613 883h1v1h-1zM1613 890h1v1h-1zM1613 898h1v1h-1zM1613 906h1v1h-1zM1613 914h1v1h-1zM1613 921h1v1h-1zM1613 929h1v1h-1zM1613 937h1v1h-1zM1613 945h1v1h-1zM1613 952h1v1h-1zM1613 960h1v1h-1zM1613 968h1v1h-1zM1690 242h1v1h-1zM1690 250h1v1h-1zM1690 257h1v1h-1zM1690 265h1v1h-1zM1690 273h1v1h-1zM1690 281h1v1h-1zM1690 288h1v1h-1zM1690 296h1v1h-1zM1690 304h1v1h-1zM1690 311h1v1h-1zM1690 319h1v1h-1zM1690 327h1v1h-1zM1690 335h1v1h-1zM1690 342h1v1h-1zM1690 350h1v1h-1zM1690 358h1v1h-1zM1690 366h1v1h-1zM1690 373h1v1h-1zM1690 381h1v1h-1zM1690 389h1v1h-1zM1690 396h1v1h-1zM1690 404h1v1h-1zM1690 412h1v1h-1zM1690 420h1v1h-1zM1690 427h1v1h-1zM1690 435h1v1h-1zM1690 443h1v1h-1zM1690 450h1v1h-1zM1690 458h1v1h-1zM1690 466h1v1h-1zM1690 474h1v1h-1zM1690 481h1v1h-1zM1690 489h1v1h-1zM1690 497h1v1h-1zM1690 504h1v1h-1zM1690 512h1v1h-1zM1690 520h1v1h-1zM1690 528h1v1h-1zM1690 535h1v1h-1zM1690 543h1v1h-1zM1690 551h1v1h-1zM1690 559h1v1h-1zM1690 566h1v1h-1zM1690 574h1v1h-1zM1690 582h1v1h-1zM1690 589h1v1h-1zM1690 597h1v1h-1zM1690 605h1v1h-1zM1690 613h1v1h-1zM1690 620h1v1h-1zM1690 628h1v1h-1zM1690 636h1v1h-1zM1690 643h1v1h-1zM1690 651h1v1h-1zM1690 659h1v1h-1zM1690 667h1v1h-1zM1690 674h1v1h-1zM1690 682h1v1h-1zM1690 690h1v1h-1zM1690 697h1v1h-1zM1690 705h1v1h-1zM1690 713h1v1h-1zM1690 721h1v1h-1zM1690 728h1v1h-1zM1690 736h1v1h-1zM1690 744h1v1h-1zM1690 752h1v1h-1zM1690 759h1v1h-1zM1690 767h1v1h-1zM1690 775h1v1h-1zM1690 782h1v1h-1zM1690 790h1v1h-1zM1690 798h1v1h-1zM1690 806h1v1h-1zM1690 813h1v1h-1zM1690 821h1v1h-1zM1690 829h1v1h-1zM1690 836h1v1h-1zM1690 844h1v1h-1zM1690 852h1v1h-1zM1690 860h1v1h-1zM1690 867h1v1h-1zM1690 875h1v1h-1zM1690 883h1v1h-1zM1690 890h1v1h-1zM1690 898h1v1h-1zM1690 906h1v1h-1zM1690 914h1v1h-1zM1690 921h1v1h-1zM1690 929h1v1h-1zM1690 937h1v1h-1zM1690 945h1v1h-1zM1690 952h1v1h-1zM1690 960h1v1h-1zM1690 968h1v1h-1zM1768 242h1v1h-1zM1768 250h1v1h-1zM1768 257h1v1h-1zM1768 265h1v1h-1zM1768 273h1v1h-1zM1768 281h1v1h-1zM1768 288h1v1h-1zM1768 296h1v1h-1zM1768 304h1v1h-1zM1768 311h1v1h-1zM1768 319h1v1h-1zM1768 327h1v1h-1zM1768 335h1v1h-1zM1768 342h1v1h-1zM1768 350h1v1h-1zM1768 358h1v1h-1zM1768 366h1v1h-1zM1768 373h1v1h-1zM1768 381h1v1h-1zM1768 389h1v1h-1zM1768 396h1v1h-1zM1768 404h1v1h-1zM1768 412h1v1h-1zM1768 420h1v1h-1zM1768 427h1v1h-1zM1768 435h1v1h-1zM1768 443h1v1h-1zM1768 450h1v1h-1zM1768 458h1v1h-1zM1768 466h1v1h-1zM1768 474h1v1h-1zM1768 481h1v1h-1zM1768 489h1v1h-1zM1768 497h1v1h-1zM1768 504h1v1h-1zM1768 512h1v1h-1zM1768 520h1v1h-1zM1768 528h1v1h-1zM1768 535h1v1h-1zM1768 543h1v1h-1zM1768 551h1v1h-1zM1768 559h1v1h-1zM1768 566h1v1h-1zM1768 574h1v1h-1zM1768 582h1v1h-1zM1768 589h1v1h-1zM1768 597h1v1h-1zM1768 605h1v1h-1zM1768 613h1v1h-1zM1768 620h1v1h-1zM1768 628h1v1h-1zM1768 636h1v1h-1zM1768 643h1v1h-1zM1768 651h1v1h-1zM1768 659h1v1h-1zM1768 667h1v1h-1zM1768 674h1v1h-1zM1768 682h1v1h-1zM1768 690h1v1h-1zM1768 697h1v1h-1zM1768 705h1v1h-1zM1768 713h1v1h-1zM1768 721h1v1h-1zM1768 728h1v1h-1zM1768 736h1v1h-1zM1768 744h1v1h-1zM1768 752h1v1h-1zM1768 759h1v1h-1zM1768 767h1v1h-1zM1768 775h1v1h-1zM1768 782h1v1h-1zM1768 790h1v1h-1zM1768 798h1v1h-1zM1768 806h1v1h-1zM1768 813h1v1h-1zM1768 821h1v1h-1zM1768 829h1v1h-1zM1768 836h1v1h-1zM1768 844h1v1h-1zM1768 852h1v1h-1zM1768 860h1v1h-1zM1768 867h1v1h-1zM1768 875h1v1h-1zM1768 883h1v1h-1zM1768 890h1v1h-1zM1768 898h1v1h-1zM1768 906h1v1h-1zM1768 914h1v1h-1zM1768 921h1v1h-1zM1768 929h1v1h-1zM1768 937h1v1h-1zM1768 945h1v1h-1zM1768 952h1v1h-1zM1768 960h1v1h-1zM1768 968h1v1h-1zM1845 242h1v1h-1zM1845 250h1v1h-1zM1845 257h1v1h-1zM1845 265h1v1h-1zM1845 273h1v1h-1zM1845 281h1v1h-1zM1845 288h1v1h-1zM1845 296h1v1h-1zM1845 304h1v1h-1zM1845 311h1v1h-1zM1845 319h1v1h-1zM1845 327h1v1h-1zM1845 335h1v1h-1zM1845 342h1v1h-1zM1845 350h1v1h-1zM1845 358h1v1h-1zM1845 366h1v1h-1zM1845 373h1v1h-1zM1845 381h1v1h-1zM1845 389h1v1h-1zM1845 396h1v1h-1zM1845 404h1v1h-1zM1845 412h1v1h-1zM1845 420h1v1h-1zM1845 427h1v1h-1zM1845 435h1v1h-1zM1845 443h1v1h-1zM1845 450h1v1h-1zM1845 458h1v1h-1zM1845 466h1v1h-1zM1845 474h1v1h-1zM1845 481h1v1h-1zM1845 489h1v1h-1zM1845 497h1v1h-1zM1845 504h1v1h-1zM1845 512h1v1h-1zM1845 520h1v1h-1zM1845 528h1v1h-1zM1845 535h1v1h-1zM1845 543h1v1h-1zM1845 551h1v1h-1zM1845 559h1v1h-1zM1845 566h1v1h-1zM1845 574h1v1h-1zM1845 582h1v1h-1zM1845 589h1v1h-1zM1845 597h1v1h-1zM1845 605h1v1h-1zM1845 613h1v1h-1zM1845 620h1v1h-1zM1845 628h1v1h-1zM1845 636h1v1h-1zM1845 643h1v1h-1zM1845 651h1v1h-1zM1845 659h1v1h-1zM1845 667h1v1h-1zM1845 674h1v1h-1zM1845 682h1v1h-1zM1845 690h1v1h-1zM1845 697h1v1h-1zM1845 705h1v1h-1zM1845 713h1v1h-1zM1845 721h1v1h-1zM1845 728h1v1h-1zM1845 736h1v1h-1zM1845 744h1v1h-1zM1845 752h1v1h-1zM1845 759h1v1h-1zM1845 767h1v1h-1zM1845 775h1v1h-1zM1845 782h1v1h-1zM1845 790h1v1h-1zM1845 798h1v1h-1zM1845 806h1v1h-1zM1845 813h1v1h-1zM1845 821h1v1h-1zM1845 829h1v1h-1zM1845 836h1v1h-1zM1845 844h1v1h-1zM1845 852h1v1h-1zM1845 860h1v1h-1zM1845 867h1v1h-1zM1845 875h1v1h-1zM1845 883h1v1h-1zM1845 890h1v1h-1zM1845 898h1v1h-1zM1845 906h1v1h-1zM1845 914h1v1h-1zM1845 921h1v1h-1zM1845 929h1v1h-1zM1845 937h1v1h-1zM1845 945h1v1h-1zM1845 952h1v1h-1zM1845 960h1v1h-1zM1845 968h1v1h-1z' fill='#fff' style='mix-blend-mode:difference'/>
<rect x='646.5' y='302.5' width='923' height='142' fill='none' stroke='#6E6E6E' stroke-width='1' stroke-dasharray='2 1' shape-rendering='crispEdges'/>
<rect x='646.5' y='467.5' width='923' height='417' fill='none' stroke='#6E6E6E' stroke-width='1' stroke-dasharray='2 1' shape-rendering='crispEdges'/>
<rect x='646.5' y='885.5' width='676' height='40' fill='none' stroke='#6E6E6E' stroke-width='1' stroke-dasharray='2 1' shape-rendering='crispEdges'/>
<rect x='1346.5' y='885.5' width='99' height='40' fill='none' stroke='#6E6E6E' stroke-width='1' stroke-dasharray='2 1' shape-rendering='crispEdges'/>
<rect x='1494.5' y='885.5' width='75' height='40' fill='none' stroke='#6E6E6E' stroke-width='1' stroke-dasharray='2 1' shape-rendering='crispEdges'/>
<polygon points='657.8,480.8 672.9,489.35 657.8,497.9' fill='#90C226'/>
<polygon points='705.9,523.5 719.7,530.65 705.9,537.8' fill='#90C226'/>
<polygon points='754.8,561.4 767,567.95 754.8,574.5' fill='#90C226'/>
<polygon points='803.6,597.7 813.8,603.0 803.6,608.3' fill='#90C226'/>
<polygon points='852.5,630.7 863.5,636.2 852.5,641.7' fill='#90C226'/>
</svg>
<div class='t' style='left:655.44px;top:312.65px;font-size:50.5px;color:#90C226;transform:scaleX(1.0315);transform-origin:0 0;'>Click to edit Master title style</div>
<div class='t' style='left:692.11px;top:476.50px;font-size:25.4px;color:#404040;transform:scaleX(0.9933);transform-origin:0 0;'>Edit Master text styles</div>
<div class='t' style='left:735.54px;top:519.17px;font-size:22.6px;color:#404040;transform:scaleX(0.9556);transform-origin:0 0;'>Second level</div>
<div class='t' style='left:779.20px;top:557.85px;font-size:19.9px;color:#404040;'>Third level</div>
<div class='t' style='left:826.96px;top:595.99px;font-size:14.9px;color:#404040;transform:scaleX(1.1400);transform-origin:0 0;'>Fourth level</div>
<div class='t' style='left:875.83px;top:629.39px;font-size:14.9px;color:#404040;transform:scaleX(1.1744);transform-origin:0 0;'>Fifth level</div>
<div class='t' style='left:656.80px;top:899.44px;font-size:12px;color:#8C8C8C;transform:scaleX(1.0206);transform-origin:0 0;'>Footer</div>
<div class='t' style='left:1373.80px;top:899.54px;font-size:12px;color:#8C8C8C;transform:scaleX(0.9903);transform-origin:0 0;'>29.10.2019</div>
<div class='t' style='left:1543.20px;top:899.99px;font-size:11px;color:#90C226;'>‹#›</div>
<div class='a' style='left:0;top:1057px;width:1920px;height:1px;background:#C6C6C6'></div>
<div class='a' style='left:0;top:1058px;width:1920px;height:21px;background:#F1F1F1'></div>
<div class='a' style='left:0;top:1079px;width:1920px;height:1px;background:#7A7A7A'></div>
<div class='a' style='left:1920px;top:1018px;width:8px;height:22px;background:#F0F0F0'></div>
<div class='a' style='left:1920px;top:1040px;width:8px;height:40px;background:#0A0E14'></div>
<div class='t' style='left:8.60px;top:1062.75px;font-size:11.4px;color:#444;transform:scaleX(0.9793);transform-origin:0 0;'>Slide Master</div>
<div class='t' style='left:123.00px;top:1062.75px;font-size:11.4px;color:#444;'>English (United Kingdom)</div>
<svg class='a' style='left:88px;top:1060px' width='18' height='16' fill='none' stroke='#666' stroke-width='1'>
<path d='M2.5 2.5H8.5L9.5 3.5V14.5L8.5 13.5H2.5Z'/><path d='M9.5 3.5L10.5 2.5H15.5V6M15.5 12V13.5H10.5L9.5 14.5'/><path d='M11 8.5L13 10.8L16.5 5.5' stroke-width='1.1'/></svg>
<svg class='a' style='left:1570px;top:1058px' width='350' height='21' fill='none' stroke='#6A6A6A' stroke-width='1'>
<path d='M4.5 3.5H18.5V15.5H4.5Z M6.5 3.5V13.5H18.5 M9.5 6.5H15.5V9.5H9.5Z'/>
<path d='M42.5 3.5H47.5V7.5H42.5Z M50.5 3.5H55.5V7.5H50.5Z M42.5 11.5H47.5V15.5H42.5Z M50.5 11.5H55.5V15.5H50.5Z'/>
<path d='M80.5 4.5C83 3.5 85 3.5 86.5 4.5C88 3.5 90 3.5 92.5 4.5V14.5C90 13.5 88 13.5 86.5 14.5C85 13.5 83 13.5 80.5 14.5Z M86.5 4.5V15.5 M82 7H85M82 9.5H85M82 12H85M88 7H91M88 9.5H91M88 12H91' stroke-width='0.9'/>
<path d='M117.5 4.5H131.5 M118.5 4.5V10.5H130.5V4.5 M124.5 10.5V15 M121 15.5H128' stroke-width='1.2'/>
<path d='M149 9.5H155' stroke-width='2'/>
<path d='M159 9.5H259' stroke='#AAAAAA'/>
<rect x='208' y='4' width='4' height='11' fill='#6A6A6A' stroke='none'/>
<path d='M263 9.5H271M267 5.5V13.5' stroke-width='2'/>
<path d='M330.5 4.5H343.5V16.5H330.5Z M337 6V9M335.5 7.5L337 6L338.5 7.5 M337 15V12M335.5 13.5L337 15L338.5 13.5 M332 10.5H335M333.5 9L332 10.5L333.5 12 M342 10.5H339M340.5 9L342 10.5L340.5 12' stroke-width='0.8'/>
</svg>
<div class='t' style='left:1857.70px;top:1062.65px;font-size:11.4px;color:#444;transform:scaleX(0.9015);transform-origin:0 0;'>103 %</div>
</body></html>
